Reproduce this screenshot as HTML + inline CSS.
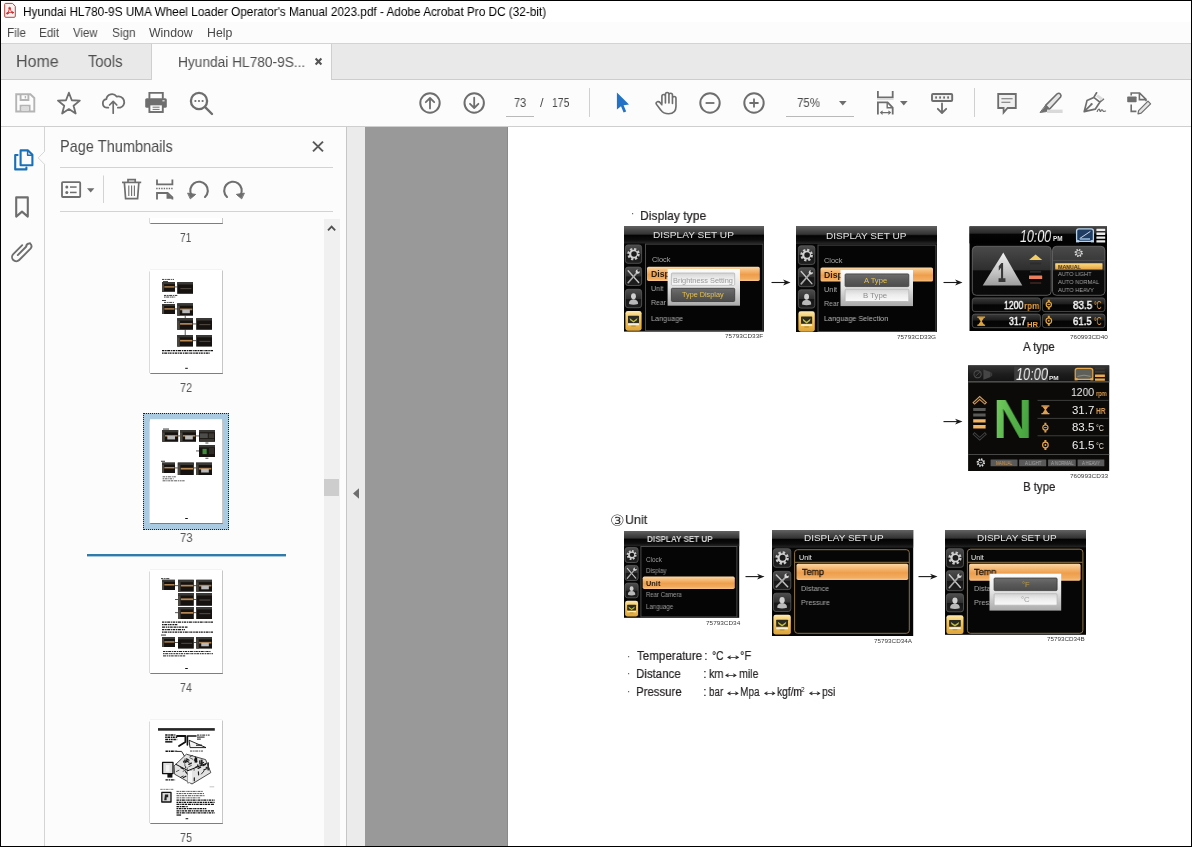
<!DOCTYPE html>
<html lang="en">
<head>
<meta charset="utf-8">
<title>Hyundai HL780-9S UMA Wheel Loader Operator's Manual 2023.pdf - Adobe Acrobat Pro DC (32-bit)</title>
<style>
*{box-sizing:border-box;margin:0;padding:0}
html,body{width:1192px;height:847px;overflow:hidden;background:#fff}
body{font-family:"Liberation Sans",sans-serif;color:#222;position:relative}
.a{position:absolute}
.t{position:absolute;white-space:nowrap;line-height:1;transform-origin:0 0;will-change:transform}
svg{position:absolute;left:0;top:0;overflow:visible}
#win{position:absolute;left:0;top:0;width:1192px;height:847px;overflow:hidden;background:#fcfcfc}
#frame{position:absolute;left:0;top:0;width:1192px;height:847px;border:1px solid #000;pointer-events:none;z-index:50}
#title{left:0;top:0;width:1192px;height:22px;background:#fff}
#title .t{left:23px;top:5px;font-size:12.3px;color:#000}
#menu{left:0;top:22px;width:1192px;height:21px;background:#fcfcfc}
#menu .t{font-size:12.3px;color:#484848;top:5px}
#tabs{left:0;top:43px;width:1192px;height:37px;background:#e9e9e9;border-top:1px solid #d3d3d3;border-bottom:1px solid #cdcdcd}
#tabact{left:151px;top:43px;width:181px;height:37px;background:#fcfcfc;border-left:1px solid #cfcfcf;border-right:1px solid #cfcfcf;border-top:1px solid #d3d3d3}
#tabs .t,#tabact .t{color:#4f4f4f}
#tool{left:0;top:80px;width:1192px;height:47px;background:#fcfcfc;border-bottom:1px solid #cfcfcf}
#tool .t{font-size:12.3px;color:#4a4a4a}
#nav{left:1px;top:127px;width:44px;height:720px;background:#fcfcfc;border-right:1px solid #d4d4d4}
#panel{left:45px;top:127px;width:301px;height:720px;background:#fcfcfc}
#psplit{left:346px;top:127px;width:19px;height:720px;background:#ebebeb;border-left:1px solid #c6c6c6}
#doc{left:365px;top:127px;width:827px;height:720px;background:#999}
.pg{position:absolute;left:0;top:0;width:1192px;height:847px}
#page{left:508px;top:127px;width:684px;height:720px;background:#fff;overflow:hidden}
</style>
</head>
<body>
<div id="win">
  <div id="title" class="a">
    <svg width="22" height="22" viewBox="0 0 22 22">
      <path d="M5.6 3.4 H12.6 L15.3 6.3 V16.2 Q15.3 17.3 14.2 17.3 H5.8 Q4.7 17.3 4.7 16.2 V4.4 Q4.7 3.4 5.6 3.4 Z" fill="#fdf1f0" stroke="#b2463f" stroke-width="1"/>
      <g fill="none" stroke="#cc2a2e" stroke-width="0.9" stroke-linecap="round">
        <path d="M9.7 8.2 Q10.6 10.9 12.6 12.6 M9.4 8.4 Q9.2 11.2 7.4 13.4 M7.6 12.9 Q10 11.7 12.4 12.4"/>
        <circle cx="9.5" cy="8.1" r="0.8"/><circle cx="7.3" cy="13.4" r="0.8"/><circle cx="12.6" cy="12.6" r="0.8"/>
      </g>
    </svg>
    <div class="t" style="left:22.85px;top:6.00px;font-size:12.4px;transform:scaleX(0.9501);color:#000;">Hyundai HL780-9S UMA Wheel Loader Operator's Manual 2023.pdf - Adobe Acrobat Pro DC (32-bit)</div>
  </div>
  <div id="menu" class="a">
<div class="t" style="left:6.74px;top:5.00px;font-size:12.3px;transform:scaleX(0.9568);color:#484848;">File</div>
<div class="t" style="left:38.65px;top:5.00px;font-size:12.3px;transform:scaleX(0.9528);color:#484848;">Edit</div>
<div class="t" style="left:73.40px;top:5.00px;font-size:12.3px;transform:scaleX(0.9286);color:#484848;">View</div>
<div class="t" style="left:111.62px;top:5.00px;font-size:12.3px;transform:scaleX(0.9597);color:#484848;">Sign</div>
<div class="t" style="left:149.40px;top:5.00px;font-size:12.3px;transform:scaleX(0.9931);color:#484848;">Window</div>
<div class="t" style="left:206.81px;top:5.00px;font-size:12.3px;transform:scaleX(0.9945);color:#484848;">Help</div>
  </div>
  <div id="tabs" class="a">
<div class="t" style="left:15.85px;top:9.00px;font-size:16.2px;transform:scaleX(0.9857);color:#4f4f4f;">Home</div>
<div class="t" style="left:88.37px;top:9.00px;font-size:16.2px;transform:scaleX(0.9121);color:#4f4f4f;">Tools</div>
  </div>
  <div id="tabact" class="a">
    <div class="t" style="left:25.70px;top:11.00px;font-size:14px;transform:scaleX(0.9790);color:#4f4f4f;">Hyundai HL780-9S...</div>
    <svg width="181" height="37" viewBox="152 44 181 37"><path d="M315.6 58.6 L321.4 64.4 M321.4 58.6 L315.6 64.4" stroke="#555" stroke-width="2.1" fill="none" stroke-linecap="butt"/></svg>
  </div>
  <div id="tool" class="a">
    <svg width="1192" height="47" viewBox="0 80 1192 47" fill="none" stroke="#6e6e6e" stroke-width="1.9" stroke-linejoin="round" stroke-linecap="round">
      <!-- save (disabled) -->
      <g stroke="#b4b4b4" stroke-linecap="butt" stroke-linejoin="miter">
        <path d="M16.2 94.2 H30.4 L34.3 98 V111.5 H16.2 Z"/>
        <path d="M20.6 94.2 V100 H28.4 V94.2" />
        <path d="M25.4 96 V98.4" stroke-width="1.4"/>
        <path d="M20.6 111.5 V105.6 H29.6 V111.5" />
        <rect x="21.6" y="106.6" width="7" height="4.4" fill="#dcdcdc" stroke="none"/>
      </g>
      <!-- star -->
      <path d="M68.90 92.70 L71.78 100.24 L79.84 100.65 L73.56 105.71 L75.66 113.50 L68.90 109.10 L62.14 113.50 L64.24 105.71 L57.96 100.65 L66.02 100.24 Z" stroke-width="1.8" stroke-linejoin="round"/>
      <!-- cloud upload -->
      <path d="M108.3 107.7 H106.6 A4.3 4.3 0 0 1 106.4 99.2 A5.6 5.6 0 0 1 116.6 96.6 A5.3 5.3 0 0 1 120.2 107.7 H117.9" stroke-width="1.8"/>
      <path d="M113.2 113.2 V101.6 M109.6 105 L113.2 101.4 L116.8 105" stroke-width="1.7"/>
      <!-- printer -->
      <path d="M149.4 98 V92.9 H162.8 V98" stroke-linejoin="miter"/>
      <rect x="145.2" y="98.2" width="21.6" height="9.6" rx="1.6" fill="#6e6e6e" stroke="none"/>
      <rect x="149.4" y="104.4" width="13.4" height="7.6" fill="#fcfcfc" stroke-linejoin="miter"/>
      <path d="M153 107.2 H159.2 M153 109.4 H159.2" stroke-width="1" stroke="#6e6e6e"/>
      <rect x="162.4" y="100.2" width="2.2" height="1.2" fill="#e8e8e8" stroke="none"/>
      <!-- find -->
      <circle cx="199" cy="101" r="8.1" stroke-width="2.3"/>
      <path d="M205.4 107.4 L212 114" stroke-width="2.4"/>
      <g fill="#6e6e6e" stroke="none"><circle cx="195.4" cy="101" r="1.1"/><circle cx="199" cy="101" r="1.1"/><circle cx="202.6" cy="101" r="1.1"/></g>
      <!-- up/down -->
      <circle cx="430" cy="103" r="9.7" stroke-width="2"/>
      <path d="M430 108.4 V98.2 M425.8 102.2 L430 98 L434.2 102.2" stroke-width="1.8"/>
      <circle cx="474.2" cy="103" r="9.7" stroke-width="2"/>
      <path d="M474.2 97.6 V107.8 M470 103.8 L474.2 108 L478.4 103.8" stroke-width="1.8"/>
      <path d="M506 116.5 H534" stroke="#b9b9b9" stroke-width="1" stroke-linecap="butt"/>
      <path d="M589.5 88 V117" stroke="#d0d0d0" stroke-width="1" stroke-linecap="butt"/>
      <!-- pointer -->
      <path d="M616.9 92.4 L616.9 109.6 L621 106.2 L623.6 112.6 L626.2 111.5 L623.6 105.2 L629 104.6 Z" fill="#2272c6" stroke="none"/>
      <!-- hand -->
      <path transform="translate(655.3 0) scale(1.1 1) translate(-655.3 0)" d="M661.3 103.6 V96.6 Q661.3 94.6 662.9 94.6 Q664.5 94.6 664.5 96.6 V103 M664.5 96.4 V94.2 Q664.5 92.4 666.1 92.4 Q667.7 92.4 667.7 94.2 V103 M667.7 96.2 V95 Q667.7 93.2 669.3 93.2 Q670.9 93.2 670.9 95 V103.6 M670.9 98.4 Q670.9 96.6 672.5 96.6 Q674.1 96.6 674.1 98.4 V106.6 Q674.1 113.8 667.4 113.8 Q662.6 113.8 660.4 110.2 L656.4 104.4 Q655.4 102.6 657 101.8 Q658.6 101.2 659.8 102.8 L661.3 104.8" stroke-width="1.5"/>
      <!-- zoom out / in -->
      <circle cx="710" cy="103" r="9.7" stroke-width="2"/>
      <path d="M705.6 103 H714.4" stroke-width="1.8" stroke-linecap="butt"/>
      <circle cx="754" cy="103" r="9.7" stroke-width="2"/>
      <path d="M749.4 103 H758.6 M754 98.4 V107.6" stroke-width="1.8" stroke-linecap="butt"/>
      <path d="M786 116.5 H854" stroke="#b9b9b9" stroke-width="1" stroke-linecap="butt"/>
      <path d="M839 101 H846.6 L842.8 105.4 Z" fill="#6e6e6e" stroke="none"/>
      <!-- fit width -->
      <g stroke-linecap="butt" stroke-linejoin="miter" stroke-width="1.8">
        <path d="M877.9 91 V97.4 H892.7 V91"/>
        <path d="M877.9 114.6 V102.4 H887.6 L892.7 107.6 V114.6"/>
        <path d="M887.2 102.8 V107.8 H892.4" stroke-width="1.4"/>
        <path d="M880.6 112.6 H890.4 M882.6 110.8 L880.6 112.6 L882.6 114.4 M888.4 110.8 L890.4 112.6 L888.4 114.4" stroke-width="1.1"/>
        <path d="M877 99.6 H893.6" stroke="#dadada" stroke-width="1"/>
      </g>
      <path d="M900 101 H907.6 L903.8 105.4 Z" fill="#6e6e6e" stroke="none"/>
      <!-- scrolling -->
      <rect x="932" y="94" width="20.2" height="7" rx="1" stroke-width="1.9" fill="#f0f0f0"/>
      <g fill="#6e6e6e" stroke="none"><rect x="935.2" y="96.4" width="1.8" height="2.2"/><rect x="939.2" y="96.4" width="1.8" height="2.2"/><rect x="943.2" y="96.4" width="1.8" height="2.2"/><rect x="947.2" y="96.4" width="1.8" height="2.2"/></g>
      <path d="M942 103.4 V112.6 M937.8 108.8 L942 113 L946.2 108.8" stroke-width="1.8"/>
      <path d="M974.5 88 V117" stroke="#d0d0d0" stroke-width="1" stroke-linecap="butt"/>
      <!-- comment -->
      <path d="M998.2 94 H1015.8 V108 H1007.6 L1003.6 112.6 V108 H998.2 Z" stroke-width="1.8" fill="#f0f0f0" stroke-linejoin="miter"/>
      <path d="M1001.4 98.8 H1012.6 M1001.4 102.2 H1010.4" stroke-width="1.1" stroke-linecap="butt"/>
      <!-- highlighter -->
      <path d="M1045.6 105.4 L1057.2 93.8 Q1058.9 92.6 1060.3 94 Q1061.6 95.4 1060.6 97 L1049.4 109.2 Z" stroke-width="1.6" fill="#e6e6e6"/>
      <path d="M1045.8 105.6 L1049.2 109 L1046.4 111.6 L1040.4 112.4 Z" fill="#6e6e6e" stroke-width="1"/>
      <rect x="1047" y="109.6" width="15.6" height="3.4" fill="#d9d9d9" stroke="none"/>
      <!-- sign pen -->
      <path d="M1096.6 92.8 L1093.8 97.4 L1099.8 102.2 L1103.4 99.2 M1093.8 97.4 L1087 100.6 L1084.2 111.6 L1095.2 109.2 L1099.8 102.2 M1084.6 111.2 L1091.2 104.6" stroke-width="1.7"/>
      <circle cx="1091.6" cy="104.2" r="1.1" fill="#6e6e6e" stroke="none"/>
      <path d="M1097.2 111.4 Q1098.6 108.4 1099.6 109.4 Q1099.8 112 1100.8 111.2 Q1101.8 109 1102.6 110.2 Q1103 112 1105.6 111" stroke-width="1.2"/>
      <path d="M1098 94.6 L1103.6 98.6 L1101.2 100.4 L1096 96.4 Z" fill="#dcdcdc" stroke="none"/>
      <!-- edit pdf -->
      <path d="M1131.2 95.4 V93 H1139.6 L1146 99.4 V101.2 M1139.4 93.4 V99.6 H1145.6" stroke-width="1.6" stroke-linejoin="miter" stroke-linecap="butt"/>
      <path d="M1131.2 104.6 V111.4 H1136.4" stroke-width="1.6" stroke-linejoin="miter" stroke-linecap="butt"/>
      <rect x="1127.2" y="96.4" width="9.4" height="5.8" rx="0.8" fill="#6e6e6e" stroke="none"/>
      <path d="M1138.6 110.6 L1148 101.2 L1150.6 103.8 L1141.2 113.2 L1138 113.8 Z" stroke-width="1.2" fill="#e4e4e4"/>
    </svg>
    <div class="t" style="left:513.54px;top:17.00px;font-size:12.3px;transform:scaleX(0.8940);color:#4a4a4a;">73</div>
<div class="t" style="left:540.30px;top:17.00px;font-size:12.6px;color:#4a4a4a;">/</div>
<div class="t" style="left:551.86px;top:17.00px;font-size:12.3px;transform:scaleX(0.8446);color:#4a4a4a;">175</div>
<div class="t" style="left:796.62px;top:17.00px;font-size:12.3px;transform:scaleX(0.9339);color:#4a4a4a;">75%</div>
  </div>
<div id="nav" class="a"></div>
<div id="panel" class="a"></div>
<div id="psplit" class="a"></div>
<div class="a" style="left:324px;top:219px;width:16px;height:627px;background:#f0f0f0"></div>
<div class="a" style="left:324px;top:479px;width:15px;height:17px;background:#cdcdcd"></div>
<svg width="365" height="720" viewBox="0 127 365 720" style="top:127px" fill="none" stroke-linejoin="round" stroke-linecap="round"><path d="M45.6 150.6 L38.4 157.9 L45.6 165.2 Z" fill="#fcfcfc" stroke="none"/><path d="M44.5 151.5 L38.2 157.9 L44.5 164.3" stroke="#d8d8d8" stroke-width="1" stroke-linejoin="miter"/><g stroke="#1a70b7" stroke-width="2.1" stroke-linejoin="round"><path d="M20.6 150.4 H28 L32.4 154.8 V165.2 H20.6 Z" fill="#fcfcfc"/><path d="M27.6 150.8 V155.2 H32" stroke-width="1.5"/><path d="M17.6 155 H15.2 V169.4 H26.4 V167.6"/></g><path d="M16.2 197.4 H27.8 V216.6 L22 211.6 L16.2 216.6 Z" stroke="#6e6e6e" stroke-width="2.1" stroke-linejoin="round"/><g transform="translate(21.5 251.8) rotate(45) scale(1.13)" stroke="#6e6e6e" stroke-width="1.65" fill="none"><path d="M-3.7 -4.6 V6.6 A3.7 3.7 0 0 0 3.7 6.6 V-7.6 A3.4 3.4 0 0 0 0.1 -10.6"/><path d="M0.1 -10.6 A3.4 3.4 0 0 0 -0.3 -6 V4.4" stroke-width="1.7"/></g><path d="M60 167.5 H333 M60 211.5 H333" stroke="#d3d3d3" stroke-width="1" stroke-linecap="butt"/><path d="M313 141.6 L323 151.4 M323 141.6 L313 151.4" stroke="#5a5a5a" stroke-width="2" stroke-linecap="butt"/><rect x="62" y="182.2" width="18.2" height="14.8" rx="0.8" stroke="#6e6e6e" stroke-width="1.8"/><g fill="#6e6e6e" stroke="none"><circle cx="66.8" cy="187" r="1.5"/><circle cx="66.8" cy="192.4" r="1.5"/><rect x="70" y="186.3" width="6.6" height="1.5"/><rect x="70" y="191.7" width="6.6" height="1.5"/><path d="M87 188.2 H94.4 L90.7 192.4 Z"/></g><path d="M103.5 175.5 V203" stroke="#d3d3d3" stroke-width="1" stroke-linecap="butt"/><g stroke="#6e6e6e" stroke-width="1.7" stroke-linecap="butt" stroke-linejoin="miter"><path d="M122 182.4 H141.2"/><path d="M128 182 V179.6 H135.2 V182"/><path d="M124.4 183 L125.6 198.6 H137.6 L138.8 183"/><path d="M128.8 185.6 V196 M131.6 185.6 V196 M134.4 185.6 V196" stroke-width="1.1"/></g><g stroke="#6e6e6e" stroke-width="1.8" stroke-linecap="butt" stroke-linejoin="miter"><path d="M157 179.4 V184.4 H172.4 V179.4"/><path d="M156.2 188.6 H173.4" stroke-dasharray="1.4 1.1" stroke-width="1.5"/><path d="M157 199.4 V193 H167.6 L172.4 197.4 V199.4"/><path d="M167.2 193.4 V198 H172" stroke-width="1.3" fill="#6e6e6e"/></g><g stroke="#6e6e6e" stroke-width="2.1"><path d="M205 197 A8.8 8.8 0 1 0 191.6 195.2" /><path d="M188 193.2 L195.6 194.4 L190.6 198.6 Z" fill="#6e6e6e" stroke-width="1"/></g><g stroke="#6e6e6e" stroke-width="2.1"><path d="M227 197 A8.8 8.8 0 1 1 240.4 195.2" /><path d="M244 193.2 L236.4 194.4 L241.4 198.6 Z" fill="#6e6e6e" stroke-width="1"/></g><path d="M328 230.4 L331.6 226.6 L335.2 230.4" stroke="#505050" stroke-width="1.8" stroke-linejoin="miter" stroke-linecap="butt"/><path d="M353 493.5 L359 488.2 V498.8 Z" fill="#6e6e6e" stroke="none"/><g stroke="none"><rect x="149" y="218" width="1" height="5.5" fill="#dadada"/><rect x="222" y="218" width="1" height="5.5" fill="#c6c6c6"/><rect x="150.3" y="223" width="72.5" height="1" fill="#7e7e7e"/><rect x="150" y="218" width="72" height="5" fill="#fff"/><rect x="149" y="271.5" width="1" height="101.5" fill="#dadada"/><rect x="150" y="269" width="72" height="1" fill="#f3f3f3"/><rect x="222" y="270.5" width="1" height="103" fill="#c6c6c6"/><rect x="150.3" y="373" width="72.5" height="1" fill="#7e7e7e"/><rect x="150" y="270" width="72" height="103" fill="#fff"/><path d="M162 279.45 h12.00" stroke="#333" stroke-width="0.9" stroke-dasharray="2.4 .7 1.5 .6 3.1 .8 1.1 .6" fill="none" stroke-linecap="butt"/><rect x="163" y="281.00" width="5.00" height="0.9" fill="#333"/><rect x="162" y="282.2" width="13" height="9.6" fill="#15120f"/><rect x="162" y="282.2" width="13" height="1.92" fill="#3a3936"/><rect x="164.34" y="286.23" width="10.14" height="1.34" fill="#b98a55"/><rect x="162" y="284.12" width="2.08" height="7.68" fill="#4a4640"/><rect x="177.2" y="282.2" width="15.8" height="11.6" fill="#15120f"/><rect x="177.2" y="282.2" width="15.8" height="2.32" fill="#3a3936"/><rect x="180.36" y="288.00" width="11.06" height="1.16" fill="#4a443c"/><rect x="175" y="286.6" width="2.4" height="0.7" fill="#111"/><path d="M164 295.45 h14.00" stroke="#222" stroke-width="0.9" stroke-dasharray="2.4 .7 1.5 .6 3.1 .8 1.1 .6" fill="none" stroke-linecap="butt"/><path d="M164 297.05 h11.20" stroke="#222" stroke-width="0.9" stroke-dasharray="1.6 .6 2.8 .7 1.2 .5 2.2 .8" fill="none" stroke-linecap="butt"/><rect x="162" y="300.00" width="4.00" height="0.9" fill="#333"/><path d="M164 302.45 h10.00" stroke="#333" stroke-width="0.9" stroke-dasharray="2.4 .7 1.5 .6 3.1 .8 1.1 .6" fill="none" stroke-linecap="butt"/><rect x="162" y="304" width="13" height="10" fill="#15120f"/><rect x="162" y="304" width="13" height="2.00" fill="#3a3936"/><rect x="164.34" y="308.20" width="10.14" height="1.40" fill="#b98a55"/><rect x="162" y="306.00" width="2.08" height="8.00" fill="#4a4640"/><rect x="177.2" y="303.3" width="15.8" height="12.4" fill="#15120f"/><rect x="177.2" y="303.3" width="15.8" height="2.48" fill="#3a3936"/><rect x="180.04" y="308.51" width="12.32" height="1.74" fill="#a87c4c"/><rect x="182.26" y="309.50" width="7.58" height="3.72" fill="#b9b9b9"/><rect x="177.2" y="305.78" width="2.53" height="9.92" fill="#4a4640"/><rect x="175" y="308.6" width="2.4" height="0.7" fill="#111"/><rect x="184.8" y="315.7" width="0.7" height="2.6" fill="#111"/><rect x="177.2" y="318.2" width="15.8" height="11.6" fill="#15120f"/><rect x="177.2" y="318.2" width="15.8" height="2.32" fill="#3a3936"/><rect x="180.04" y="323.07" width="12.32" height="1.62" fill="#b98a55"/><rect x="177.2" y="320.52" width="2.53" height="9.28" fill="#4a4640"/><rect x="196.2" y="318.2" width="15.8" height="11.6" fill="#15120f"/><rect x="196.2" y="318.2" width="15.8" height="2.32" fill="#3a3936"/><rect x="199.36" y="324.00" width="11.06" height="1.16" fill="#4a443c"/><rect x="193" y="323.6" width="3.2" height="0.7" fill="#111"/><rect x="184.8" y="329.8" width="0.7" height="5.2" fill="#111"/><rect x="177.2" y="335" width="15.8" height="11.6" fill="#15120f"/><rect x="177.2" y="335" width="15.8" height="2.32" fill="#3a3936"/><rect x="180.04" y="339.87" width="12.32" height="1.62" fill="#b98a55"/><rect x="177.2" y="337.32" width="2.53" height="9.28" fill="#4a4640"/><rect x="196.2" y="335" width="15.8" height="11.6" fill="#15120f"/><rect x="196.2" y="335" width="15.8" height="2.32" fill="#3a3936"/><rect x="199.36" y="340.80" width="11.06" height="1.16" fill="#4a443c"/><rect x="193" y="340.4" width="3.2" height="0.7" fill="#111"/><path d="M162 350.65 h51.00" stroke="#111" stroke-width="1.3" stroke-dasharray="2.4 .7 1.5 .6 3.1 .8 1.1 .6" fill="none" stroke-linecap="butt"/><path d="M162 353.05 h47.94" stroke="#111" stroke-width="1.3" stroke-dasharray="1.6 .6 2.8 .7 1.2 .5 2.2 .8" fill="none" stroke-linecap="butt"/><rect x="185.2" y="367.8" width="2.6" height="1" fill="#111"/><rect x="143" y="413" width="86" height="117" fill="#a9cae0"/><rect x="149" y="421.5" width="1" height="101.5" fill="#dadada"/><rect x="150" y="419" width="72" height="1" fill="#f3f3f3"/><rect x="222" y="420.5" width="1" height="103" fill="#c6c6c6"/><rect x="150.3" y="523" width="72.5" height="1" fill="#7e7e7e"/><rect x="150" y="420" width="72" height="103" fill="#fff"/><rect x="163" y="428.60" width="6.00" height="0.9" fill="#222"/><rect x="162.2" y="430" width="16" height="11.8" fill="#15120f"/><rect x="162.2" y="430" width="16" height="2.36" fill="#3a3936"/><rect x="165.08" y="434.96" width="12.48" height="1.65" fill="#a87c4c"/><rect x="167.32" y="435.90" width="7.68" height="3.54" fill="#b9b9b9"/><rect x="162.2" y="432.36" width="2.56" height="9.44" fill="#4a4640"/><rect x="180" y="430" width="16" height="11.8" fill="#15120f"/><rect x="180" y="430" width="16" height="2.36" fill="#3a3936"/><rect x="182.88" y="434.96" width="12.48" height="1.65" fill="#a87c4c"/><rect x="185.12" y="435.90" width="7.68" height="3.54" fill="#b9b9b9"/><rect x="180" y="432.36" width="2.56" height="9.44" fill="#4a4640"/><rect x="199" y="430" width="16" height="11.8" fill="#15120f"/><rect x="199" y="430" width="16" height="2.36" fill="#3a3936"/><rect x="199.80" y="433.30" width="8.00" height="4.72" fill="#4c4c4a"/><rect x="208.60" y="433.30" width="5.60" height="4.72" fill="#3d3a34"/><rect x="199.80" y="438.73" width="14.40" height="2.36" fill="#3b3733"/><rect x="178.2" y="435.6" width="1.8" height="0.7" fill="#111"/><rect x="196" y="435.6" width="3" height="0.7" fill="#111"/><rect x="205.4" y="442.6" width="3" height="0.8" fill="#222"/><rect x="199" y="445" width="16" height="12" fill="#15120f"/><rect x="199" y="445" width="16" height="2.40" fill="#3a3936"/><rect x="202.52" y="448.84" width="4.16" height="5.28" fill="#3f8a3d"/><rect x="208.92" y="448.00" width="5.28" height="6.00" fill="#2f2c28"/><rect x="196" y="450.6" width="3" height="0.7" fill="#111"/><rect x="205.4" y="457.8" width="3" height="0.8" fill="#222"/><rect x="161" y="460.80" width="4.00" height="0.9" fill="#222"/><rect x="162" y="462.6" width="13" height="10.4" fill="#15120f"/><rect x="162" y="462.6" width="13" height="2.08" fill="#3a3936"/><rect x="164.34" y="466.97" width="10.14" height="1.46" fill="#b98a55"/><rect x="162" y="464.68" width="2.08" height="8.32" fill="#4a4640"/><rect x="177.8" y="462.6" width="16" height="12.4" fill="#15120f"/><rect x="177.8" y="462.6" width="16" height="2.48" fill="#3a3936"/><rect x="180.68" y="467.81" width="12.48" height="1.74" fill="#b98a55"/><rect x="177.8" y="465.08" width="2.56" height="9.92" fill="#4a4640"/><rect x="196" y="462.6" width="16" height="12.4" fill="#15120f"/><rect x="196" y="462.6" width="16" height="2.48" fill="#3a3936"/><rect x="198.88" y="467.81" width="12.48" height="1.74" fill="#a87c4c"/><rect x="201.12" y="468.80" width="7.68" height="3.72" fill="#b9b9b9"/><rect x="196" y="465.08" width="2.56" height="9.92" fill="#4a4640"/><rect x="175" y="467.6" width="2.8" height="0.7" fill="#111"/><rect x="193.8" y="467.6" width="2.2" height="0.7" fill="#111"/><path d="M162.6 476.80 h13.20" stroke="#333" stroke-width="0.8" stroke-dasharray="2.4 .7 1.5 .6 3.1 .8 1.1 .6" fill="none" stroke-linecap="butt"/><path d="M162.6 478.80 h11.00" stroke="#333" stroke-width="0.8" stroke-dasharray="1.6 .6 2.8 .7 1.2 .5 2.2 .8" fill="none" stroke-linecap="butt"/><path d="M162.6 480.80 h22.00" stroke="#333" stroke-width="0.8" stroke-dasharray="3 .7 1.3 .6 1.9 .6 2.6 .8" fill="none" stroke-linecap="butt"/><rect x="185.2" y="518" width="2.6" height="1" fill="#111"/><rect x="87" y="554" width="199" height="2.4" fill="#2f7cab"/><rect x="149" y="571.5" width="1" height="101.5" fill="#dadada"/><rect x="150" y="569" width="72" height="1" fill="#f3f3f3"/><rect x="222" y="570.5" width="1" height="103" fill="#c6c6c6"/><rect x="150.3" y="673" width="72.5" height="1" fill="#7e7e7e"/><rect x="150" y="570" width="72" height="103" fill="#fff"/><path d="M161 578.65 h9.00" stroke="#222" stroke-width="0.9" stroke-dasharray="2.4 .7 1.5 .6 3.1 .8 1.1 .6" fill="none" stroke-linecap="butt"/><rect x="162" y="579.8" width="13" height="10.2" fill="#15120f"/><rect x="162" y="579.8" width="13" height="2.04" fill="#3a3936"/><rect x="164.34" y="584.08" width="10.14" height="1.43" fill="#b98a55"/><rect x="162" y="581.84" width="2.08" height="8.16" fill="#4a4640"/><rect x="178" y="579.8" width="15.8" height="11.9" fill="#15120f"/><rect x="178" y="579.8" width="15.8" height="2.38" fill="#3a3936"/><rect x="180.84" y="584.80" width="12.32" height="1.67" fill="#b98a55"/><rect x="178" y="582.18" width="2.53" height="9.52" fill="#4a4640"/><rect x="196.2" y="579.8" width="15.8" height="11.9" fill="#15120f"/><rect x="196.2" y="579.8" width="15.8" height="2.38" fill="#3a3936"/><rect x="199.04" y="584.80" width="12.32" height="1.67" fill="#a87c4c"/><rect x="201.26" y="585.75" width="7.58" height="3.57" fill="#b9b9b9"/><rect x="196.2" y="582.18" width="2.53" height="9.52" fill="#4a4640"/><rect x="175" y="585.4" width="3" height="0.7" fill="#111"/><rect x="193.8" y="585.4" width="2.4" height="0.7" fill="#111"/><rect x="178" y="593" width="15.8" height="12.8" fill="#15120f"/><rect x="178" y="593" width="15.8" height="2.56" fill="#3a3936"/><rect x="180.84" y="598.38" width="12.32" height="1.79" fill="#b98a55"/><rect x="178" y="595.56" width="2.53" height="10.24" fill="#4a4640"/><rect x="196.2" y="593" width="15.8" height="12.8" fill="#15120f"/><rect x="196.2" y="593" width="15.8" height="2.56" fill="#3a3936"/><rect x="199.36" y="599.40" width="11.06" height="1.28" fill="#4a443c"/><rect x="175" y="599" width="3" height="0.7" fill="#111"/><rect x="193.8" y="599" width="2.4" height="0.7" fill="#111"/><rect x="178" y="607" width="15.8" height="12" fill="#15120f"/><rect x="178" y="607" width="15.8" height="2.40" fill="#3a3936"/><rect x="180.84" y="612.04" width="12.32" height="1.68" fill="#b98a55"/><rect x="178" y="609.40" width="2.53" height="9.60" fill="#4a4640"/><rect x="196.2" y="607" width="15.8" height="12" fill="#15120f"/><rect x="196.2" y="607" width="15.8" height="2.40" fill="#3a3936"/><rect x="199.36" y="613.00" width="11.06" height="1.20" fill="#4a443c"/><rect x="175" y="612.4" width="3" height="0.7" fill="#111"/><rect x="193.8" y="612.4" width="2.4" height="0.7" fill="#111"/><path d="M162 622.20 h51.00" stroke="#1a1a1a" stroke-width="1.2" stroke-dasharray="2.4 .7 1.5 .6 3.1 .8 1.1 .6" fill="none" stroke-linecap="butt"/><path d="M162 624.70 h15.30" stroke="#1a1a1a" stroke-width="1.2" stroke-dasharray="1.6 .6 2.8 .7 1.2 .5 2.2 .8" fill="none" stroke-linecap="butt"/><path d="M162 627.20 h25.50" stroke="#1a1a1a" stroke-width="1.2" stroke-dasharray="3 .7 1.3 .6 1.9 .6 2.6 .8" fill="none" stroke-linecap="butt"/><path d="M162 629.70 h22.95" stroke="#1a1a1a" stroke-width="1.2" stroke-dasharray="2.4 .7 1.5 .6 3.1 .8 1.1 .6" fill="none" stroke-linecap="butt"/><path d="M162 632.20 h51.00" stroke="#1a1a1a" stroke-width="1.2" stroke-dasharray="1.6 .6 2.8 .7 1.2 .5 2.2 .8" fill="none" stroke-linecap="butt"/><rect x="161" y="634.60" width="5.00" height="0.9" fill="#222"/><rect x="162" y="637" width="13" height="10" fill="#15120f"/><rect x="162" y="637" width="13" height="2.00" fill="#3a3936"/><rect x="164.34" y="641.20" width="10.14" height="1.40" fill="#b98a55"/><rect x="162" y="639.00" width="2.08" height="8.00" fill="#4a4640"/><rect x="178" y="637" width="15.8" height="11.6" fill="#15120f"/><rect x="178" y="637" width="15.8" height="2.32" fill="#3a3936"/><rect x="181.16" y="642.80" width="11.06" height="1.16" fill="#4a443c"/><rect x="196.2" y="637" width="15.8" height="11.6" fill="#15120f"/><rect x="196.2" y="637" width="15.8" height="2.32" fill="#3a3936"/><rect x="199.04" y="641.87" width="12.32" height="1.62" fill="#a87c4c"/><rect x="201.26" y="642.80" width="7.58" height="3.48" fill="#b9b9b9"/><rect x="196.2" y="639.32" width="2.53" height="9.28" fill="#4a4640"/><rect x="175" y="642" width="3" height="0.7" fill="#111"/><rect x="193.8" y="642" width="2.4" height="0.7" fill="#111"/><path d="M163 651.50 h47.50" stroke="#222" stroke-width="1" stroke-dasharray="2.4 .7 1.5 .6 3.1 .8 1.1 .6" fill="none" stroke-linecap="butt"/><path d="M163 653.70 h50.00" stroke="#222" stroke-width="1" stroke-dasharray="1.6 .6 2.8 .7 1.2 .5 2.2 .8" fill="none" stroke-linecap="butt"/><path d="M163 655.90 h22.50" stroke="#222" stroke-width="1" stroke-dasharray="3 .7 1.3 .6 1.9 .6 2.6 .8" fill="none" stroke-linecap="butt"/><rect x="185.2" y="668" width="2.6" height="1" fill="#111"/><rect x="149" y="721.5" width="1" height="101.5" fill="#dadada"/><rect x="150" y="719" width="72" height="1" fill="#f3f3f3"/><rect x="222" y="720.5" width="1" height="103" fill="#c6c6c6"/><rect x="150.3" y="823" width="72.5" height="1" fill="#7e7e7e"/><rect x="150" y="720" width="72" height="103" fill="#fff"/><rect x="158" y="728.1" width="56.8" height="2.6" fill="#262626"/><path d="M165.2 734.95 h10.20" stroke="#111" stroke-width="1.5" stroke-dasharray="2.4 .7 1.5 .6 3.1 .8 1.1 .6" fill="none" stroke-linecap="butt"/><path d="M165.2 737.25 h12.00" stroke="#111" stroke-width="1.5" stroke-dasharray="1.6 .6 2.8 .7 1.2 .5 2.2 .8" fill="none" stroke-linecap="butt"/><path d="M165.2 739.55 h12.00" stroke="#111" stroke-width="1.5" stroke-dasharray="3 .7 1.3 .6 1.9 .6 2.6 .8" fill="none" stroke-linecap="butt"/><rect x="165.2" y="741.10" width="7.20" height="1.5" fill="#111"/><path d="M177 736 H185.4 V742 L179 746" stroke="#111" stroke-width="1.8" fill="none"/><path d="M187.4 745 V736 H196" stroke="#111" stroke-width="1.6" fill="none"/><path d="M197 735.10 h12.60" stroke="#1a1a1a" stroke-width="1" stroke-dasharray="2.4 .7 1.5 .6 3.1 .8 1.1 .6" fill="none" stroke-linecap="butt"/><rect x="197" y="736.60" width="7.56" height="1" fill="#1a1a1a"/><rect x="197" y="738.60" width="3.78" height="1" fill="#1a1a1a"/><path d="M189.4 740.4 L206 747.6 H190.4 Z" fill="#f2f2f2" stroke="#111" stroke-width="0.9"/><rect x="196" y="744.6" width="6" height="1.2" fill="#222"/><path d="M165.5 751.30 h11.60" stroke="#111" stroke-width="1.4" stroke-dasharray="2.4 .7 1.5 .6 3.1 .8 1.1 .6" fill="none" stroke-linecap="butt"/><path d="M190 751.05 h13.00" stroke="#333" stroke-width="0.9" stroke-dasharray="2.4 .7 1.5 .6 3.1 .8 1.1 .6" fill="none" stroke-linecap="butt"/><path d="M177 751.4 H181.6 L185 757" stroke="#111" stroke-width="0.9" fill="none"/><path d="M174.4 765.6 L186.4 754.2 L205.6 759.6 L210.8 772.6 L192 784 L175 774.4 Z" fill="#e3e3e3" stroke="#222" stroke-width="0.8"/><path d="M186.4 758.9 l2.6 1.3" stroke="#1c1c1c" stroke-width="1.2"/><path d="M179.0 770.2 l-2.6 1.3" stroke="#1c1c1c" stroke-width="0.7"/><path d="M189.9 756.8 l2.6 -1.3" stroke="#1c1c1c" stroke-width="0.7"/><path d="M183.1 771.3 l2.6 -1.3" stroke="#1c1c1c" stroke-width="0.7"/><path d="M203.5 762.5 l-2.6 1.3" stroke="#1c1c1c" stroke-width="1.2"/><path d="M185.9 776.2 l-2.6 1.3" stroke="#1c1c1c" stroke-width="1.2"/><path d="M194.3 759.9 l2.6 1.3" stroke="#1c1c1c" stroke-width="1.2"/><path d="M197.8 766.1 l0 -1.3" stroke="#1c1c1c" stroke-width="1.2"/><path d="M205.6 764.4 l-2.6 1.3" stroke="#1c1c1c" stroke-width="1.2"/><path d="M185.6 767.9 l0 -1.3" stroke="#1c1c1c" stroke-width="0.9"/><path d="M195.5 756.9 l0.2 1.3" stroke="#1c1c1c" stroke-width="0.9"/><path d="M180.9 767.7 l2.6 1.3" stroke="#1c1c1c" stroke-width="1.2"/><path d="M194.3 777.8 l0 3" stroke="#1c1c1c" stroke-width="1.2"/><path d="M187.2 767.9 l0.2 1.3" stroke="#1c1c1c" stroke-width="0.7"/><path d="M206.2 767.3 l2.6 1.3" stroke="#1c1c1c" stroke-width="1.2"/><path d="M198.4 771.8 l0.2 3" stroke="#1c1c1c" stroke-width="1.2"/><path d="M188.3 772.4 l2.6 -1.3" stroke="#1c1c1c" stroke-width="0.9"/><path d="M188.5 777.7 l2.6 1.3" stroke="#1c1c1c" stroke-width="0.9"/><path d="M188.9 762.2 l-2.6 -1.3" stroke="#1c1c1c" stroke-width="1.2"/><path d="M184.9 765.8 l0 -1.3" stroke="#1c1c1c" stroke-width="0.7"/><path d="M183.4 761.1 l0.2 1.3" stroke="#1c1c1c" stroke-width="0.9"/><path d="M185.0 758.8 l0 3" stroke="#1c1c1c" stroke-width="0.7"/><path d="M198.1 768.4 l2.6 -1.3" stroke="#1c1c1c" stroke-width="1.2"/><path d="M201.5 765.2 l0.2 -1.3" stroke="#1c1c1c" stroke-width="0.7"/><path d="M191.4 765.4 l-2.6 1.3" stroke="#1c1c1c" stroke-width="0.7"/><path d="M190.1 757.9 l2.6 1.3" stroke="#1c1c1c" stroke-width="0.7"/><path d="M194.1 769.0 l0 1.3" stroke="#1c1c1c" stroke-width="0.7"/><path d="M204.0 771.0 l-2.6 3" stroke="#1c1c1c" stroke-width="0.9"/><path d="M195.3 767.3 l2.6 -1.3" stroke="#1c1c1c" stroke-width="0.9"/><path d="M191.4 763.1 l-2.6 1.3" stroke="#1c1c1c" stroke-width="1.2"/><path d="M187.0 761.9 l-2.6 1.3" stroke="#1c1c1c" stroke-width="0.7"/><path d="M206.4 768.7 l-2.6 1.3" stroke="#1c1c1c" stroke-width="1.2"/><path d="M185.5 771.7 l2.6 3" stroke="#1c1c1c" stroke-width="1.2"/><path d="M187.7 759.3 l-2.6 3" stroke="#1c1c1c" stroke-width="1.2"/><path d="M183.1 776.1 l-2.6 1.3" stroke="#1c1c1c" stroke-width="0.9"/><path d="M199.7 760.9 l0.2 3" stroke="#1c1c1c" stroke-width="1.2"/><path d="M184.9 761.7 l0 -1.3" stroke="#1c1c1c" stroke-width="1.2"/><path d="M188 770.6 V783 M188 770.6 L206.4 763.4 M188 770.6 L176 764.4" stroke="#111" stroke-width="1" fill="none"/><rect x="187.6" y="771" width="4.4" height="11.4" fill="#f6f6f6"/><rect x="194.6" y="757.6" width="2.6" height="5" fill="#111"/><rect x="200.6" y="759.6" width="2" height="6.4" fill="#222"/><rect x="207.4" y="762.4" width="1.6" height="8" fill="#333"/><rect x="162.6" y="762.4" width="10.4" height="11.2" fill="#dedede" stroke="#111" stroke-width="1.3"/><rect x="166" y="765" width="3.4" height="6.6" fill="#f4f4f4"/><rect x="167.4" y="773.8" width="5" height="3.8" fill="#111"/><path d="M165.5 779.80 h9.60" stroke="#111" stroke-width="1.2" stroke-dasharray="2.4 .7 1.5 .6 3.1 .8 1.1 .6" fill="none" stroke-linecap="butt"/><rect x="209.6" y="786.60" width="4.60" height="0.6" fill="#999"/><path d="M160.3 789.35 h13.00" stroke="#444" stroke-width="0.7" stroke-dasharray="2.4 .7 1.5 .6 3.1 .8 1.1 .6" fill="none" stroke-linecap="butt"/><rect x="161.8" y="792.4" width="9.2" height="9.6" fill="#d8d8d8" stroke="#111" stroke-width="1.3"/><path d="M165 794.6 h3.2 v2.6 h-1.6 v3 h-2.4 z" fill="#222"/><path d="M176.5 791.40 h26.74" stroke="#2a2a2a" stroke-width="0.8" stroke-dasharray="2.4 .7 1.5 .6 3.1 .8 1.1 .6" fill="none" stroke-linecap="butt"/><path d="M176.5 793.55 h27.50" stroke="#2a2a2a" stroke-width="0.8" stroke-dasharray="1.6 .6 2.8 .7 1.2 .5 2.2 .8" fill="none" stroke-linecap="butt"/><path d="M176.5 795.70 h28.27" stroke="#2a2a2a" stroke-width="0.8" stroke-dasharray="3 .7 1.3 .6 1.9 .6 2.6 .8" fill="none" stroke-linecap="butt"/><path d="M176.5 797.85 h23.68" stroke="#2a2a2a" stroke-width="0.8" stroke-dasharray="2.4 .7 1.5 .6 3.1 .8 1.1 .6" fill="none" stroke-linecap="butt"/><path d="M176.5 800.20 h38.20" stroke="#111" stroke-width="1.2" stroke-dasharray="2.4 .7 1.5 .6 3.1 .8 1.1 .6" fill="none" stroke-linecap="butt"/><path d="M176.5 802.32 h38.20" stroke="#111" stroke-width="1.2" stroke-dasharray="1.6 .6 2.8 .7 1.2 .5 2.2 .8" fill="none" stroke-linecap="butt"/><path d="M176.5 804.44 h37.44" stroke="#111" stroke-width="1.2" stroke-dasharray="3 .7 1.3 .6 1.9 .6 2.6 .8" fill="none" stroke-linecap="butt"/><path d="M176.5 806.56 h11.46" stroke="#111" stroke-width="1.2" stroke-dasharray="2.4 .7 1.5 .6 3.1 .8 1.1 .6" fill="none" stroke-linecap="butt"/><path d="M176.5 808.68 h29.80" stroke="#111" stroke-width="1.2" stroke-dasharray="1.6 .6 2.8 .7 1.2 .5 2.2 .8" fill="none" stroke-linecap="butt"/><path d="M176.5 810.80 h38.20" stroke="#111" stroke-width="1.2" stroke-dasharray="3 .7 1.3 .6 1.9 .6 2.6 .8" fill="none" stroke-linecap="butt"/><path d="M176.5 812.92 h38.20" stroke="#111" stroke-width="1.2" stroke-dasharray="2.4 .7 1.5 .6 3.1 .8 1.1 .6" fill="none" stroke-linecap="butt"/><rect x="176.5" y="814.44" width="4.58" height="1.2" fill="#111"/><rect x="185.6" y="818.2" width="2.6" height="1" fill="#111"/></g></svg>
<div class="a" style="left:143px;top:413px;width:86px;height:117px;border:1px dotted #1e1e1e"></div>
<div class="t" style="left:60.06px;top:138.00px;font-size:16.2px;transform:scaleX(0.8978);color:#4b4b4b;">Page Thumbnails</div>
<div class="t" style="left:180.49px;top:232.00px;font-size:12.4px;transform:scaleX(0.8185);color:#555;">71</div>
<div class="t" style="left:180.45px;top:382.00px;font-size:12.4px;transform:scaleX(0.8742);color:#555;">72</div>
<div class="t" style="left:180.04px;top:532.00px;font-size:12.4px;transform:scaleX(0.9015);color:#555;">73</div>
<div class="t" style="left:180.46px;top:682.00px;font-size:12.4px;transform:scaleX(0.8571);color:#555;">74</div>
<div class="t" style="left:180.46px;top:832.00px;font-size:12.4px;transform:scaleX(0.8698);color:#555;">75</div>
<div class="pg">
<div id="doc" class="a"></div>
<div id="page" class="a"></div>
<div class="a" style="left:507px;top:127px;width:1px;height:720px;background:#8a8a8a"></div>
<svg width="1192" height="847" viewBox="0 0 1192 847"><defs><linearGradient id="hg" x1="0" y1="0" x2="0" y2="1"><stop offset="0" stop-color="#626262"/><stop offset=".2" stop-color="#4c4c4c"/><stop offset=".46" stop-color="#343434"/><stop offset=".54" stop-color="#040404"/><stop offset=".8" stop-color="#0c0c0c"/><stop offset="1" stop-color="#262626"/></linearGradient><linearGradient id="bg" x1="0" y1="0" x2="0" y2="1"><stop offset="0" stop-color="#fbd9a8"/><stop offset=".18" stop-color="#f7c384"/><stop offset=".55" stop-color="#ee9e4c"/><stop offset=".85" stop-color="#f2ac5f"/><stop offset="1" stop-color="#f6c58c"/></linearGradient><linearGradient id="pg" x1="0" y1="0" x2="0" y2="1"><stop offset="0" stop-color="#fdfdfd"/><stop offset=".5" stop-color="#e2e2e2"/><stop offset="1" stop-color="#a9a9a9"/></linearGradient><linearGradient id="pgd" x1="0" y1="0" x2="0" y2="1"><stop offset="0" stop-color="#6e6e6e"/><stop offset=".5" stop-color="#5a5a5a"/><stop offset="1" stop-color="#4c4c4c"/></linearGradient><linearGradient id="pgl" x1="0" y1="0" x2="0" y2="1"><stop offset="0" stop-color="#d4d4d4"/><stop offset=".45" stop-color="#ececec"/><stop offset="1" stop-color="#fafafa"/></linearGradient></defs></svg>
<div class="t" style="left:630.88px;top:209.00px;font-size:10px;color:#4a4a4a;">·</div>
<div class="t" style="left:639.55px;top:209.00px;font-size:13.6px;transform:scaleX(0.8944);color:#272425;-webkit-text-stroke:0.22px #272425;">Display type</div>
<svg width="1192" height="847" viewBox="0 0 1192 847"><rect x="624" y="226" width="140.00" height="105.60" fill="#050505"/><rect x="624" y="226" width="140.00" height="17.40" fill="url(#hg)"/><linearGradient id="sb1" x1="0" y1="0" x2="0" y2="1"><stop offset="0" stop-color="#4e4e4e"/><stop offset=".5" stop-color="#2f2f2f"/><stop offset=".52" stop-color="#161616"/><stop offset="1" stop-color="#202020"/></linearGradient><rect x="625.40" y="244.90" width="16.20" height="18.40" rx="2.6" fill="url(#sb1)" stroke="#5c5c5c" stroke-width="0.8"/><circle cx="633.50" cy="254.10" r="4.86" fill="none" stroke="#c9c9c9" stroke-width="2.75" stroke-dasharray="2.11 1.70"/><circle cx="633.50" cy="254.10" r="4.37" fill="#d2d2d2"/><circle cx="633.99" cy="253.94" r="2.75" fill="#1c1c1c"/><linearGradient id="sb2" x1="0" y1="0" x2="0" y2="1"><stop offset="0" stop-color="#4e4e4e"/><stop offset=".5" stop-color="#2f2f2f"/><stop offset=".52" stop-color="#161616"/><stop offset="1" stop-color="#202020"/></linearGradient><rect x="625.40" y="267.10" width="16.20" height="18.40" rx="2.6" fill="url(#sb2)" stroke="#5c5c5c" stroke-width="0.8"/><path d="M628.15 270.78 L638.68 282.56" stroke="#c4c4c4" stroke-width="1.38" stroke-linecap="round"/><path d="M628.15 282.74 L637.06 272.62" stroke="#a9a9a9" stroke-width="1.62" stroke-linecap="round"/><circle cx="637.71" cy="271.70" r="2.11" fill="#d6d6d6"/><circle cx="638.68" cy="270.60" r="1.22" fill="#2c2c2c"/><linearGradient id="sb3" x1="0" y1="0" x2="0" y2="1"><stop offset="0" stop-color="#4e4e4e"/><stop offset=".5" stop-color="#2f2f2f"/><stop offset=".52" stop-color="#161616"/><stop offset="1" stop-color="#202020"/></linearGradient><rect x="625.40" y="289.30" width="16.20" height="18.40" rx="2.6" fill="url(#sb3)" stroke="#5c5c5c" stroke-width="0.8"/><path d="M628.96 304.02 Q628.64 299.60 633.50 299.24 Q638.36 299.60 638.04 304.02 Q633.50 305.49 628.96 304.02 Z" fill="#b9b9b9"/><ellipse cx="633.50" cy="296.29" rx="2.43" ry="2.92" fill="#d0d0d0"/><linearGradient id="sb4" x1="0" y1="0" x2="0" y2="1"><stop offset="0" stop-color="#fdeab4"/><stop offset=".25" stop-color="#f6cf6e"/><stop offset=".6" stop-color="#efba4c"/><stop offset="1" stop-color="#dca53c"/></linearGradient><rect x="625.40" y="310.90" width="16.20" height="19.80" rx="2.4" fill="url(#sb4)"/><rect x="627.99" y="315.85" width="11.02" height="7.13" rx="0.6" fill="#2b2a22"/><path d="M629.53 317.99 L633.50 320.98 L637.47 317.99 L636.80 320.27 L633.50 322.62 L630.20 320.27 Z" fill="#c2c044"/><rect x="627.99" y="323.57" width="11.02" height="1.68" rx="0.5" fill="#f7efd6"/><rect x="631.30" y="325.55" width="4.41" height="1.19" fill="#b8933a"/><rect x="645.50" y="244.10" width="117.40" height="86.60" fill="#050505" stroke="#4a4a4a" stroke-width="1"/></svg>
<div class="t" style="left:652.91px;top:230.00px;font-size:9.6px;transform:scaleX(1.0532);color:#e4e4e4;">DISPLAY SET UP</div>
<div class="t" style="left:651.53px;top:256.00px;font-size:7.4px;transform:scaleX(0.9792);color:#a9a9a9;">Clock</div>
<svg width="1192" height="847" viewBox="0 0 1192 847"><rect x="647.00" y="266.80" width="112.80" height="14.10" rx="1.6" fill="url(#bg)"/></svg>
<div class="t" style="left:651.03px;top:270.00px;font-size:8.6px;transform:scaleX(1.0135);color:#2a1d10;font-weight:bold;">Display</div>
<div class="t" style="left:651.46px;top:285.00px;font-size:7.4px;transform:scaleX(0.9522);color:#a9a9a9;">Unit</div>
<div class="t" style="left:651.47px;top:299.00px;font-size:7.4px;transform:scaleX(0.9348);color:#a9a9a9;">Rear Camera</div>
<div class="t" style="left:651.45px;top:315.00px;font-size:7.4px;transform:scaleX(0.9795);color:#a9a9a9;">Language</div>
<svg width="1192" height="847" viewBox="0 0 1192 847"><rect x="667.60" y="269.00" width="72.40" height="36.70" fill="url(#pg)"/><rect x="671.40" y="273.00" width="63.30" height="12.30" rx="1" fill="url(#pgl)" stroke="#b5b5b5" stroke-width="0.8"/><rect x="671.40" y="288.30" width="63.30" height="13.20" rx="1" fill="url(#pgd)" stroke="#3a3a3a" stroke-width="0.8"/></svg>
<div class="t" style="left:673.46px;top:278.00px;font-size:6.8px;transform:scaleX(1.0870);color:#9a9a9a;">Brightness Setting</div>
<div class="t" style="left:682.37px;top:292.00px;font-size:6.8px;transform:scaleX(1.0685);color:#e6c04e;">Type Display</div>
<div class="t" style="left:725.12px;top:334.00px;font-size:5.8px;transform:scaleX(1.1053);color:#3a3a3a;">75793CD33F</div>
<svg width="1192" height="847" viewBox="0 0 1192 847"><path d="M771.5 282.5 H786.5" stroke="#1a1a1a" stroke-width="1.1" fill="none"/><path d="M790.5 282.5 L783.1 279.6 L785.1 282.5 L783.1 285.4 Z" fill="#1a1a1a"/></svg>
<svg width="1192" height="847" viewBox="0 0 1192 847"><rect x="796" y="226" width="141.00" height="106.00" fill="#050505"/><rect x="796" y="226" width="141.00" height="18.00" fill="url(#hg)"/><linearGradient id="sb5" x1="0" y1="0" x2="0" y2="1"><stop offset="0" stop-color="#4e4e4e"/><stop offset=".5" stop-color="#2f2f2f"/><stop offset=".52" stop-color="#161616"/><stop offset="1" stop-color="#202020"/></linearGradient><rect x="798.40" y="245.80" width="16.40" height="18.60" rx="2.6" fill="url(#sb5)" stroke="#5c5c5c" stroke-width="0.8"/><circle cx="806.60" cy="255.10" r="4.92" fill="none" stroke="#c9c9c9" stroke-width="2.79" stroke-dasharray="2.13 1.72"/><circle cx="806.60" cy="255.10" r="4.43" fill="#d2d2d2"/><circle cx="807.09" cy="254.94" r="2.79" fill="#1c1c1c"/><linearGradient id="sb6" x1="0" y1="0" x2="0" y2="1"><stop offset="0" stop-color="#4e4e4e"/><stop offset=".5" stop-color="#2f2f2f"/><stop offset=".52" stop-color="#161616"/><stop offset="1" stop-color="#202020"/></linearGradient><rect x="798.40" y="267.70" width="16.40" height="19.00" rx="2.6" fill="url(#sb6)" stroke="#5c5c5c" stroke-width="0.8"/><path d="M801.19 271.50 L811.85 283.66" stroke="#c4c4c4" stroke-width="1.39" stroke-linecap="round"/><path d="M801.19 283.85 L810.21 273.40" stroke="#a9a9a9" stroke-width="1.64" stroke-linecap="round"/><circle cx="810.86" cy="272.45" r="2.13" fill="#d6d6d6"/><circle cx="811.85" cy="271.31" r="1.23" fill="#2c2c2c"/><linearGradient id="sb7" x1="0" y1="0" x2="0" y2="1"><stop offset="0" stop-color="#4e4e4e"/><stop offset=".5" stop-color="#2f2f2f"/><stop offset=".52" stop-color="#161616"/><stop offset="1" stop-color="#202020"/></linearGradient><rect x="798.40" y="289.80" width="16.40" height="18.30" rx="2.6" fill="url(#sb7)" stroke="#5c5c5c" stroke-width="0.8"/><path d="M802.01 304.44 Q801.68 300.05 806.60 299.68 Q811.52 300.05 811.19 304.44 Q806.60 305.90 802.01 304.44 Z" fill="#b9b9b9"/><ellipse cx="806.60" cy="296.75" rx="2.46" ry="2.95" fill="#d0d0d0"/><linearGradient id="sb8" x1="0" y1="0" x2="0" y2="1"><stop offset="0" stop-color="#fdeab4"/><stop offset=".25" stop-color="#f6cf6e"/><stop offset=".6" stop-color="#efba4c"/><stop offset="1" stop-color="#dca53c"/></linearGradient><rect x="798.40" y="311.30" width="16.40" height="20.40" rx="2.4" fill="url(#sb8)"/><rect x="801.02" y="316.40" width="11.15" height="7.34" rx="0.6" fill="#2b2a22"/><path d="M802.59 318.60 L806.60 321.69 L810.61 318.60 L809.95 320.95 L806.60 323.38 L803.25 320.95 Z" fill="#c2c044"/><rect x="801.02" y="324.36" width="11.15" height="1.73" rx="0.5" fill="#f7efd6"/><rect x="804.37" y="326.40" width="4.46" height="1.22" fill="#b8933a"/><rect x="818.00" y="245.10" width="117.90" height="86.40" fill="#050505" stroke="#4a4a4a" stroke-width="1"/></svg>
<div class="t" style="left:825.92px;top:231.00px;font-size:9.6px;transform:scaleX(1.0466);color:#e4e4e4;">DISPLAY SET UP</div>
<div class="t" style="left:824.33px;top:257.00px;font-size:7.4px;transform:scaleX(0.9957);color:#a9a9a9;">Clock</div>
<svg width="1192" height="847" viewBox="0 0 1192 847"><rect x="820.50" y="267.40" width="112.50" height="14.20" rx="1.6" fill="url(#bg)"/></svg>
<div class="t" style="left:824.03px;top:271.00px;font-size:8.6px;transform:scaleX(1.0135);color:#2a1d10;font-weight:bold;">Display</div>
<div class="t" style="left:824.26px;top:286.00px;font-size:7.4px;transform:scaleX(0.9680);color:#a9a9a9;">Unit</div>
<div class="t" style="left:824.27px;top:300.00px;font-size:7.4px;transform:scaleX(0.9394);color:#a9a9a9;">Rear Camera</div>
<div class="t" style="left:824.15px;top:315.00px;font-size:7.4px;transform:scaleX(0.9841);color:#b8b8b8;">Language Selection</div>
<svg width="1192" height="847" viewBox="0 0 1192 847"><rect x="840.50" y="270.00" width="72.50" height="36.10" fill="url(#pg)"/><rect x="845.10" y="273.90" width="63.70" height="12.70" rx="1" fill="url(#pgd)" stroke="#3a3a3a" stroke-width="0.8"/><rect x="845.10" y="289.20" width="63.70" height="12.30" rx="1" fill="url(#pgl)" stroke="#b5b5b5" stroke-width="0.8"/></svg>
<div class="t" style="left:864.00px;top:278.00px;font-size:6.8px;transform:scaleX(1.1204);color:#e6c04e;">A Type</div>
<div class="t" style="left:863.43px;top:293.00px;font-size:6.8px;transform:scaleX(1.1479);color:#8e8e8e;">B Type</div>
<div class="t" style="left:896.62px;top:335.00px;font-size:5.8px;transform:scaleX(1.1025);color:#3a3a3a;">75793CD33G</div>
<svg width="1192" height="847" viewBox="0 0 1192 847"><path d="M943.5 282.5 H958.5" stroke="#1a1a1a" stroke-width="1.1" fill="none"/><path d="M962.5 282.5 L955.1 279.6 L957.1 282.5 L955.1 285.4 Z" fill="#1a1a1a"/></svg>
<svg width="1192" height="847" viewBox="0 0 1192 847"><defs><linearGradient id="ap" x1="0" y1="0" x2="0" y2="1"><stop offset="0" stop-color="#4a4a4a"/><stop offset=".48" stop-color="#2e2e2e"/><stop offset=".5" stop-color="#0b0b0b"/><stop offset="1" stop-color="#0a0a0a"/></linearGradient><linearGradient id="ar" x1="0" y1="0" x2="0" y2="1"><stop offset="0" stop-color="#3a3a3a"/><stop offset=".45" stop-color="#1c1c1c"/><stop offset=".5" stop-color="#050505"/><stop offset="1" stop-color="#080808"/></linearGradient><linearGradient id="at" x1="0" y1="0" x2="0" y2="1"><stop offset="0" stop-color="#f2f2f2"/><stop offset=".6" stop-color="#c4c4c4"/><stop offset="1" stop-color="#9d9d9d"/></linearGradient><linearGradient id="ah" x1="0" y1="0" x2="0" y2="1"><stop offset="0" stop-color="#454545"/><stop offset=".4" stop-color="#2a2a2a"/><stop offset=".45" stop-color="#050505"/><stop offset="1" stop-color="#000"/></linearGradient><linearGradient id="am" x1="0" y1="0" x2="0" y2="1"><stop offset="0" stop-color="#fbdc84"/><stop offset="1" stop-color="#e9a440"/></linearGradient></defs><rect x="969.50" y="226.40" width="137.50" height="104.60" rx="0" fill="#030303" /><rect x="969.50" y="226.40" width="137.50" height="17.00" rx="0" fill="url(#ah)" /><rect x="1076.60" y="228.80" width="16.80" height="12.60" rx="2.2" fill="#1f3d63" stroke="#b9d3ea" stroke-width="1.3" /><path d="M1079.6 238.6 L1090.4 231.4" stroke="#dfe9f3" stroke-width="0.9"/><rect x="1080" y="238.2" width="10" height="1.6" fill="#8fb2d4"/><rect x="1076" y="240.2" width="3.2" height="2.2" fill="#b9d3ea"/><rect x="1090.8" y="240.2" width="3.2" height="2.2" fill="#b9d3ea"/><rect x="1096.40" y="228.80" width="8.80" height="2.30" rx="0.3" fill="#ececec" /><rect x="1096.40" y="232.60" width="8.80" height="2.30" rx="0.3" fill="#ececec" /><rect x="1096.40" y="236.40" width="8.80" height="2.30" rx="0.3" fill="#ececec" /><rect x="1096.40" y="240.20" width="8.80" height="2.30" rx="0.3" fill="#ececec" /><rect x="972.30" y="246.30" width="78.90" height="49.00" rx="4" fill="url(#ap)" stroke="#6d6d6d" stroke-width="0.8" /><rect x="1052.50" y="246.30" width="52.40" height="49.00" rx="4" fill="url(#ap)" stroke="#6d6d6d" stroke-width="0.8" /><path d="M1003.3 252.6 L1022.3 285.6 H982.7 Z" fill="url(#at)"/><path d="M1029 259.9 L1035.6 254.6 L1042.2 259.9 Z" fill="#f3cd62"/><rect x="1030.00" y="262.40" width="11.20" height="2.00" rx="0.3" fill="#2c2c2c" /><rect x="1030.00" y="270.80" width="11.20" height="2.00" rx="0.3" fill="#2a2a2a" /><rect x="1029.00" y="275.60" width="13.20" height="3.50" rx="0.3" fill="#ee7f5c" /><rect x="1030.00" y="282.00" width="11.20" height="2.00" rx="0.3" fill="#33201c" /><circle cx="1078.70" cy="253.00" r="3.30" fill="none" stroke="#dcdcdc" stroke-width="1.65" stroke-dasharray="1.39 1.19"/><circle cx="1078.70" cy="253.00" r="2.57" fill="none" stroke="#dcdcdc" stroke-width="0.8"/><path d="M1077.38 253.00 H1080.02" stroke="#dcdcdc" stroke-width="0.7"/><rect x="1053.4" y="259.9" width="50.6" height="0.8" fill="#555"/><rect x="1055.20" y="263.30" width="47.30" height="6.10" rx="0.4" fill="url(#am)" /><rect x="972.30" y="297.90" width="68.10" height="13.70" rx="2.6" fill="url(#ar)" stroke="#5a5a5a" stroke-width="0.8" /><rect x="1042.40" y="297.90" width="62.50" height="13.70" rx="2.6" fill="url(#ar)" stroke="#5a5a5a" stroke-width="0.8" /><rect x="972.30" y="314.10" width="68.10" height="13.60" rx="2.6" fill="url(#ar)" stroke="#5a5a5a" stroke-width="0.8" /><rect x="1042.40" y="314.10" width="62.50" height="13.60" rx="2.6" fill="url(#ar)" stroke="#5a5a5a" stroke-width="0.8" /><path d="M978.10 317.40 H984.30 L981.80 321.20 L984.30 325.00 H978.10 L980.60 321.20 Z" fill="#d9a441"/><rect x="977.30" y="316.50" width="7.80" height="1.3" fill="#d9a441"/><rect x="977.30" y="324.60" width="7.80" height="1.3" fill="#d9a441"/><circle cx="1048.80" cy="304.60" r="2.60" fill="none" stroke="#e2a744" stroke-width="1.2"/><path d="M1048.80 299.80 V302.00 M1048.80 307.20 V309.40" stroke="#e2a744" stroke-width="2"/><path d="M1047.50 304.60 H1050.10" stroke="#e2a744" stroke-width="1"/><circle cx="1048.80" cy="320.80" r="2.80" fill="none" stroke="#e2a744" stroke-width="1.2"/><path d="M1048.80 315.80 V318.00 M1048.80 323.60 V325.80" stroke="#e2a744" stroke-width="2"/><circle cx="1048.80" cy="320.80" r="0.95" fill="#e2a744"/></svg>
<div class="t" style="left:1020.21px;top:228.00px;font-size:17.2px;transform:scaleX(0.7229);color:#f4f4f4;font-style:italic;">10:00</div>
<div class="t" style="left:1052.53px;top:236.00px;font-size:6.4px;color:#e8e8e8;font-weight:bold;">PM</div>
<div class="t" style="left:997.74px;top:261.00px;font-size:24px;transform:scaleX(0.5701);color:#3a3a3a;-webkit-text-stroke:1.9px #3a3a3a;">1</div>
<div class="t" style="left:1057.68px;top:264.00px;font-size:6.2px;transform:scaleX(0.8548);color:#3a2a10;font-weight:bold;">MANUAL</div>
<div class="t" style="left:1058.00px;top:271.00px;font-size:6px;transform:scaleX(0.9304);color:#a4a4a4;">AUTO LIGHT</div>
<div class="t" style="left:1058.00px;top:279.00px;font-size:6px;transform:scaleX(0.9372);color:#a4a4a4;">AUTO NORMAL</div>
<div class="t" style="left:1058.00px;top:287.00px;font-size:6px;transform:scaleX(0.9449);color:#a4a4a4;">AUTO HEAVY</div>
<div class="t" style="left:1003.77px;top:300.00px;font-size:11.2px;transform:scaleX(0.7726);color:#f2f2f2;-webkit-text-stroke:0.55px #f2f2f2;">1200</div>
<div class="t" style="left:1023.69px;top:302.00px;font-size:9px;transform:scaleX(0.9035);color:#eea23f;font-weight:bold;">rpm</div>
<div class="t" style="left:1072.51px;top:300.00px;font-size:11.2px;transform:scaleX(0.8833);color:#f2f2f2;-webkit-text-stroke:0.55px #f2f2f2;">83.5</div>
<div class="t" style="left:1094.03px;top:301.00px;font-size:10px;transform:scaleX(0.6595);color:#eea23f;">°C</div>
<div class="t" style="left:1009.41px;top:316.00px;font-size:11.2px;transform:scaleX(0.7806);color:#f2f2f2;-webkit-text-stroke:0.55px #f2f2f2;">31.7</div>
<div class="t" style="left:1027.12px;top:321.00px;font-size:7px;transform:scaleX(1.0884);color:#eea23f;font-weight:bold;">HR</div>
<div class="t" style="left:1073.02px;top:316.00px;font-size:11.2px;transform:scaleX(0.8598);color:#f2f2f2;-webkit-text-stroke:0.55px #f2f2f2;">61.5</div>
<div class="t" style="left:1094.03px;top:317.00px;font-size:10px;transform:scaleX(0.6595);color:#eea23f;">°C</div>
<div class="t" style="left:1070.02px;top:335.00px;font-size:5.8px;transform:scaleX(1.1096);color:#3a3a3a;">760993CD40</div>
<div class="t" style="left:1023.00px;top:340.00px;font-size:13.6px;transform:scaleX(0.8397);color:#272425;-webkit-text-stroke:0.22px #272425;">A type</div>
<svg width="1192" height="847" viewBox="0 0 1192 847"><path d="M943.5 421.6 H958.5" stroke="#1a1a1a" stroke-width="1.1" fill="none"/><path d="M962.5 421.6 L955.1 418.70000000000005 L957.1 421.6 L955.1 424.5 Z" fill="#1a1a1a"/></svg>
<svg width="1192" height="847" viewBox="0 0 1192 847"><defs><linearGradient id="bh" x1="0" y1="0" x2="0" y2="1"><stop offset="0" stop-color="#353535"/><stop offset=".5" stop-color="#1d1d1d"/><stop offset=".9" stop-color="#141414"/><stop offset="1" stop-color="#3e3e3e"/></linearGradient><linearGradient id="bn" x1="0" y1="0" x2="1" y2="1"><stop offset="0" stop-color="#6cc35a"/><stop offset=".5" stop-color="#4fae45"/><stop offset="1" stop-color="#3a9438"/></linearGradient></defs><rect x="968.10" y="365.40" width="141.10" height="105.60" rx="0" fill="#0b0a09" /><rect x="968.10" y="365.40" width="141.10" height="17.20" rx="0" fill="url(#bh)" /><circle cx="977.6" cy="374.2" r="3.6" fill="none" stroke="#4a4a4a" stroke-width="1.1"/><path d="M975.2 376.6 L980 371.8" stroke="#4a4a4a" stroke-width="1"/><path d="M983.4 369.4 L990.6 372 V377 L983.4 379.8 Z" fill="#454545"/><rect x="990.6" y="372.6" width="1.6" height="3.6" fill="#3a3a3a"/><rect x="1014.20" y="366.60" width="33.90" height="14.60" rx="0" fill="#3c3c3c" /><rect x="1075.20" y="368.40" width="17.60" height="11.00" rx="2.2" fill="#5f5f5a" stroke="#e6a94e" stroke-width="1.2" /><path d="M1077.4 376.4 Q1084 374 1090.6 376.4" stroke="#9a9a92" stroke-width="0.8" fill="none"/><rect x="1074.6" y="378.2" width="3" height="2.2" fill="#e6a94e"/><rect x="1090.4" y="378.2" width="3" height="2.2" fill="#e6a94e"/><rect x="1095.00" y="367.40" width="9.90" height="2.00" rx="0.2" fill="#3a3632" /><rect x="1095.00" y="370.80" width="9.90" height="2.00" rx="0.2" fill="#3a3632" /><rect x="1095.00" y="374.60" width="9.90" height="2.40" rx="0.2" fill="#eeaa4e" /><rect x="1095.00" y="378.40" width="9.90" height="2.40" rx="0.2" fill="#eeaa4e" /><path d="M974.6 402.6 L979.7 398 L984.8 402.6" fill="none" stroke="#dba258" stroke-width="3.2" stroke-linejoin="miter" stroke-linecap="square"/><path d="M974.6 402.6 L979.7 398 L984.8 402.6" fill="none" stroke="#2a2118" stroke-width="1.2" stroke-linejoin="miter" stroke-linecap="square"/><rect x="968.1" y="381.2" width="141.1" height="1" fill="#585858"/><rect x="973.20" y="408.00" width="12.40" height="3.00" rx="0.2" fill="#5a5a58" /><rect x="973.20" y="413.60" width="12.40" height="3.00" rx="0.2" fill="#5a5a58" /><rect x="973.20" y="419.30" width="12.40" height="3.30" rx="0.2" fill="#f3b563" /><rect x="973.20" y="425.10" width="12.40" height="3.30" rx="0.2" fill="#f3b563" /><path d="M974.6 434.2 L979.7 438.8 L984.8 434.2" fill="none" stroke="#454545" stroke-width="3" stroke-linejoin="miter" stroke-linecap="square"/><path d="M974.6 434.2 L979.7 438.8 L984.8 434.2" fill="none" stroke="#0e0e0e" stroke-width="1.2" stroke-linejoin="miter" stroke-linecap="square"/><rect x="1037.5" y="399.90000000000003" width="71" height="0.8" fill="#4a4a4a"/><rect x="1037.5" y="417.90000000000003" width="71" height="0.8" fill="#4a4a4a"/><rect x="1037.5" y="435.40000000000003" width="71" height="0.8" fill="#4a4a4a"/><rect x="968.1" y="454.1" width="141.1" height="0.9" fill="#4e4e4e"/><path d="M1042.20 406.20 H1048.60 L1046.00 409.80 L1048.60 413.40 H1042.20 L1044.80 409.80 Z" fill="#dfa050"/><rect x="1041.40" y="405.30" width="8.00" height="1.3" fill="#dfa050"/><rect x="1041.40" y="413.00" width="8.00" height="1.3" fill="#dfa050"/><circle cx="1045.40" cy="427.60" r="2.60" fill="none" stroke="#e2a24c" stroke-width="1.2"/><path d="M1045.40 422.80 V425.00 M1045.40 430.20 V432.40" stroke="#e2a24c" stroke-width="2"/><path d="M1044.10 427.60 H1046.70" stroke="#e2a24c" stroke-width="1"/><circle cx="1045.40" cy="445.00" r="2.80" fill="none" stroke="#e2a24c" stroke-width="1.2"/><path d="M1045.40 440.00 V442.20 M1045.40 447.80 V450.00" stroke="#e2a24c" stroke-width="2"/><circle cx="1045.40" cy="445.00" r="0.95" fill="#e2a24c"/><circle cx="980.80" cy="462.60" r="3.40" fill="none" stroke="#e0e0e0" stroke-width="1.70" stroke-dasharray="1.43 1.22"/><circle cx="980.80" cy="462.60" r="2.65" fill="none" stroke="#e0e0e0" stroke-width="0.8"/><path d="M979.44 462.60 H982.16" stroke="#e0e0e0" stroke-width="0.7"/><rect x="990.60" y="459.40" width="26.90" height="6.80" rx="0.3" fill="#5a5a5a" /><rect x="1019.10" y="459.40" width="27.10" height="6.80" rx="0.3" fill="#5a5a5a" /><rect x="1048.10" y="459.40" width="27.70" height="6.80" rx="0.3" fill="#5a5a5a" /><rect x="1077.60" y="459.40" width="26.70" height="6.80" rx="0.3" fill="#5a5a5a" /></svg>
<div class="t" style="left:1016.00px;top:366.00px;font-size:16.4px;transform:scaleX(0.7777);color:#f4f4f4;font-style:italic;">10:00</div>
<div class="t" style="left:1049.10px;top:375.00px;font-size:6px;transform:scaleX(1.0785);color:#e8e8e8;font-weight:bold;">PM</div>
<div class="t" style="left:992.99px;top:391.00px;font-size:56.4px;transform:scaleX(0.9675);color:transparent;font-weight:bold;background:linear-gradient(100deg,#7bcf66 0%,#58b54b 45%,#3f9c3c 100%);-webkit-background-clip:text;background-clip:text;">N</div>
<div class="t" style="left:1071.26px;top:387.00px;font-size:11.4px;transform:scaleX(0.9112);color:#f0f0f0;">1200</div>
<div class="t" style="left:1095.85px;top:390.00px;font-size:7px;transform:scaleX(0.8081);color:#d59a52;font-weight:bold;">rpm</div>
<div class="t" style="left:1071.92px;top:405.00px;font-size:11.4px;transform:scaleX(1.0054);color:#f0f0f0;">31.7</div>
<div class="t" style="left:1096.20px;top:407.00px;font-size:8.4px;transform:scaleX(0.7911);color:#d59a52;font-weight:bold;">HR</div>
<div class="t" style="left:1071.86px;top:422.00px;font-size:11.4px;transform:scaleX(1.0054);color:#f0f0f0;">83.5</div>
<div class="t" style="left:1095.99px;top:424.00px;font-size:8.6px;transform:scaleX(0.8111);color:#e8e0d0;">°C</div>
<div class="t" style="left:1071.73px;top:440.00px;font-size:11.4px;transform:scaleX(1.0114);color:#f0f0f0;">61.5</div>
<div class="t" style="left:1095.99px;top:442.00px;font-size:8.6px;transform:scaleX(0.8111);color:#e8e0d0;">°C</div>
<div class="t" style="left:995.68px;top:462.00px;font-size:4.6px;transform:scaleX(0.8568);color:#d89a48;">MANUAL</div>
<div class="t" style="left:1024.60px;top:462.00px;font-size:4.6px;transform:scaleX(0.9197);color:#a8a8a8;">A LIGHT</div>
<div class="t" style="left:1051.00px;top:462.00px;font-size:4.6px;transform:scaleX(0.9455);color:#a8a8a8;">A NORMAL</div>
<div class="t" style="left:1082.40px;top:462.00px;font-size:4.6px;transform:scaleX(0.9217);color:#a8a8a8;">A HEAVY</div>
<div class="t" style="left:1069.72px;top:474.00px;font-size:5.8px;transform:scaleX(1.1155);color:#3a3a3a;">760993CD33</div>
<div class="t" style="left:1023.41px;top:480.00px;font-size:13.6px;transform:scaleX(0.8395);color:#272425;-webkit-text-stroke:0.22px #272425;">B type</div>
<div class="t" style="left:609.73px;top:513.00px;font-size:15.7px;transform:scaleX(1.0413);color:#3a3738;font-family:'DejaVu Sans',sans-serif;">③</div>
<div class="t" style="left:624.58px;top:513.00px;font-size:13.6px;transform:scaleX(0.9180);color:#272425;-webkit-text-stroke:0.22px #272425;">Unit</div>
<svg width="1192" height="847" viewBox="0 0 1192 847"><rect x="624" y="531" width="115.20" height="86.80" fill="#050505"/><rect x="624" y="531" width="115.20" height="15.20" fill="url(#hg)"/><linearGradient id="sb9" x1="0" y1="0" x2="0" y2="1"><stop offset="0" stop-color="#4e4e4e"/><stop offset=".5" stop-color="#2f2f2f"/><stop offset=".52" stop-color="#161616"/><stop offset="1" stop-color="#202020"/></linearGradient><rect x="625.10" y="547.50" width="13.00" height="15.00" rx="2.6" fill="url(#sb9)" stroke="#5c5c5c" stroke-width="0.8"/><circle cx="631.60" cy="555.00" r="3.90" fill="none" stroke="#c9c9c9" stroke-width="2.21" stroke-dasharray="1.69 1.36"/><circle cx="631.60" cy="555.00" r="3.51" fill="#d2d2d2"/><circle cx="631.99" cy="554.87" r="2.21" fill="#1c1c1c"/><linearGradient id="sb10" x1="0" y1="0" x2="0" y2="1"><stop offset="0" stop-color="#4e4e4e"/><stop offset=".5" stop-color="#2f2f2f"/><stop offset=".52" stop-color="#161616"/><stop offset="1" stop-color="#202020"/></linearGradient><rect x="625.10" y="565.40" width="13.00" height="15.10" rx="2.6" fill="url(#sb10)" stroke="#5c5c5c" stroke-width="0.8"/><path d="M627.31 568.42 L635.76 578.08" stroke="#c4c4c4" stroke-width="1.10" stroke-linecap="round"/><path d="M627.31 578.24 L634.46 569.93" stroke="#a9a9a9" stroke-width="1.30" stroke-linecap="round"/><circle cx="634.98" cy="569.17" r="1.69" fill="#d6d6d6"/><circle cx="635.76" cy="568.27" r="0.97" fill="#2c2c2c"/><linearGradient id="sb11" x1="0" y1="0" x2="0" y2="1"><stop offset="0" stop-color="#4e4e4e"/><stop offset=".5" stop-color="#2f2f2f"/><stop offset=".52" stop-color="#161616"/><stop offset="1" stop-color="#202020"/></linearGradient><rect x="625.10" y="583.10" width="13.00" height="14.70" rx="2.6" fill="url(#sb11)" stroke="#5c5c5c" stroke-width="0.8"/><path d="M627.96 594.86 Q627.70 591.33 631.60 591.04 Q635.50 591.33 635.24 594.86 Q631.60 596.04 627.96 594.86 Z" fill="#b9b9b9"/><ellipse cx="631.60" cy="588.69" rx="1.95" ry="2.34" fill="#d0d0d0"/><linearGradient id="sb12" x1="0" y1="0" x2="0" y2="1"><stop offset="0" stop-color="#fdeab4"/><stop offset=".25" stop-color="#f6cf6e"/><stop offset=".6" stop-color="#efba4c"/><stop offset="1" stop-color="#dca53c"/></linearGradient><rect x="625.10" y="600.70" width="13.00" height="15.90" rx="2.4" fill="url(#sb12)"/><rect x="627.18" y="604.67" width="8.84" height="5.72" rx="0.6" fill="#2b2a22"/><path d="M628.42 606.39 L631.60 608.80 L634.78 606.39 L634.25 608.22 L631.60 610.11 L628.95 608.22 Z" fill="#c2c044"/><rect x="627.18" y="610.88" width="8.84" height="1.35" rx="0.5" fill="#f7efd6"/><rect x="629.83" y="612.47" width="3.54" height="0.95" fill="#b8933a"/><rect x="640.90" y="546.50" width="96.00" height="70.40" fill="#050505" stroke="#4a4a4a" stroke-width="1"/></svg>
<div class="t" style="left:646.52px;top:535.00px;font-size:8.4px;transform:scaleX(0.9664);color:#d4d4d4;font-weight:bold;">DISPLAY SET UP</div>
<div class="t" style="left:646.39px;top:557.00px;font-size:6.4px;transform:scaleX(0.9911);color:#9c9c9c;">Clock</div>
<div class="t" style="left:646.21px;top:568.00px;font-size:6.4px;transform:scaleX(0.9721);color:#9c9c9c;">Display</div>
<svg width="1192" height="847" viewBox="0 0 1192 847"><rect x="642.70" y="576.60" width="92.10" height="12.30" rx="1.6" fill="url(#bg)"/></svg>
<div class="t" style="left:646.26px;top:580.00px;font-size:7.4px;transform:scaleX(0.9959);color:#2a1d10;font-weight:bold;">Unit</div>
<div class="t" style="left:646.23px;top:592.00px;font-size:6.4px;transform:scaleX(0.9311);color:#9c9c9c;">Rear Camera</div>
<div class="t" style="left:646.22px;top:604.00px;font-size:6.4px;transform:scaleX(0.9522);color:#9c9c9c;">Language</div>
<div class="t" style="left:705.82px;top:621.00px;font-size:5.8px;transform:scaleX(1.1066);color:#3a3a3a;">75793CD34</div>
<svg width="1192" height="847" viewBox="0 0 1192 847"><path d="M745.5 576.6 H760.5" stroke="#1a1a1a" stroke-width="1.1" fill="none"/><path d="M764.5 576.6 L757.1 573.7 L759.1 576.6 L757.1 579.5 Z" fill="#1a1a1a"/></svg>
<svg width="1192" height="847" viewBox="0 0 1192 847"><rect x="772" y="530" width="141.20" height="106.00" fill="#050505"/><rect x="772" y="530" width="141.20" height="17.60" fill="url(#hg)"/><linearGradient id="sb13" x1="0" y1="0" x2="0" y2="1"><stop offset="0" stop-color="#4e4e4e"/><stop offset=".5" stop-color="#2f2f2f"/><stop offset=".52" stop-color="#161616"/><stop offset="1" stop-color="#202020"/></linearGradient><rect x="773.40" y="548.70" width="17.40" height="18.60" rx="2.6" fill="url(#sb13)" stroke="#5c5c5c" stroke-width="0.8"/><circle cx="782.10" cy="558.00" r="5.22" fill="none" stroke="#c9c9c9" stroke-width="2.96" stroke-dasharray="2.26 1.83"/><circle cx="782.10" cy="558.00" r="4.70" fill="#d2d2d2"/><circle cx="782.62" cy="557.83" r="2.96" fill="#1c1c1c"/><linearGradient id="sb14" x1="0" y1="0" x2="0" y2="1"><stop offset="0" stop-color="#4e4e4e"/><stop offset=".5" stop-color="#2f2f2f"/><stop offset=".52" stop-color="#161616"/><stop offset="1" stop-color="#202020"/></linearGradient><rect x="773.40" y="571.30" width="17.40" height="18.30" rx="2.6" fill="url(#sb14)" stroke="#5c5c5c" stroke-width="0.8"/><path d="M776.36 574.96 L787.67 586.67" stroke="#c4c4c4" stroke-width="1.48" stroke-linecap="round"/><path d="M776.36 586.86 L785.93 576.79" stroke="#a9a9a9" stroke-width="1.74" stroke-linecap="round"/><circle cx="786.62" cy="575.88" r="2.26" fill="#d6d6d6"/><circle cx="787.67" cy="574.78" r="1.31" fill="#2c2c2c"/><linearGradient id="sb15" x1="0" y1="0" x2="0" y2="1"><stop offset="0" stop-color="#4e4e4e"/><stop offset=".5" stop-color="#2f2f2f"/><stop offset=".52" stop-color="#161616"/><stop offset="1" stop-color="#202020"/></linearGradient><rect x="773.40" y="593.20" width="17.40" height="18.30" rx="2.6" fill="url(#sb15)" stroke="#5c5c5c" stroke-width="0.8"/><path d="M777.23 607.84 Q776.88 603.45 782.10 603.08 Q787.32 603.45 786.97 607.84 Q782.10 609.30 777.23 607.84 Z" fill="#b9b9b9"/><ellipse cx="782.10" cy="600.15" rx="2.61" ry="3.13" fill="#d0d0d0"/><linearGradient id="sb16" x1="0" y1="0" x2="0" y2="1"><stop offset="0" stop-color="#fdeab4"/><stop offset=".25" stop-color="#f6cf6e"/><stop offset=".6" stop-color="#efba4c"/><stop offset="1" stop-color="#dca53c"/></linearGradient><rect x="773.40" y="614.70" width="17.40" height="19.90" rx="2.4" fill="url(#sb16)"/><rect x="776.18" y="619.67" width="11.83" height="7.16" rx="0.6" fill="#2b2a22"/><path d="M777.84 621.82 L782.10 624.83 L786.36 621.82 L785.65 624.12 L782.10 626.48 L778.55 624.12 Z" fill="#c2c044"/><rect x="776.18" y="627.44" width="11.83" height="1.69" rx="0.5" fill="#f7efd6"/><rect x="779.73" y="629.43" width="4.73" height="1.19" fill="#b8933a"/><rect x="794.60" y="549.70" width="114.70" height="83.60" rx="3" fill="#060606" stroke="#8d7448" stroke-width="1"/></svg>
<div class="t" style="left:803.72px;top:533.00px;font-size:9.6px;transform:scaleX(1.0374);color:#e4e4e4;">DISPLAY SET UP</div>
<div class="t" style="left:798.72px;top:554.00px;font-size:7.2px;transform:scaleX(0.9673);color:#eaeaea;">Unit</div>
<svg width="1192" height="847" viewBox="0 0 1192 847"><rect x="795" y="561.8" width="114" height="1" fill="#8d7448"/><rect x="796.50" y="563.80" width="111.70" height="16.10" rx="1.6" fill="url(#bg)"/></svg>
<div class="t" style="left:801.62px;top:567.00px;font-size:9.4px;transform:scaleX(0.9580);color:#1c130a;-webkit-text-stroke:0.3px #1c130a;">Temp</div>
<div class="t" style="left:801.25px;top:585.00px;font-size:7.4px;transform:scaleX(0.9777);color:#a9a9a9;">Distance</div>
<div class="t" style="left:801.25px;top:599.00px;font-size:7.4px;transform:scaleX(0.9776);color:#a9a9a9;">Pressure</div>
<div class="t" style="left:873.63px;top:639.00px;font-size:5.8px;transform:scaleX(1.0931);color:#3a3a3a;">75793CD34A</div>
<svg width="1192" height="847" viewBox="0 0 1192 847"><path d="M918.5 576.6 H933.5" stroke="#1a1a1a" stroke-width="1.1" fill="none"/><path d="M937.5 576.6 L930.1 573.7 L932.1 576.6 L930.1 579.5 Z" fill="#1a1a1a"/></svg>
<svg width="1192" height="847" viewBox="0 0 1192 847"><rect x="945" y="530" width="141.00" height="104.80" fill="#050505"/><rect x="945" y="530" width="141.00" height="17.30" fill="url(#hg)"/><linearGradient id="sb17" x1="0" y1="0" x2="0" y2="1"><stop offset="0" stop-color="#4e4e4e"/><stop offset=".5" stop-color="#2f2f2f"/><stop offset=".52" stop-color="#161616"/><stop offset="1" stop-color="#202020"/></linearGradient><rect x="946.40" y="548.70" width="17.10" height="18.60" rx="2.6" fill="url(#sb17)" stroke="#5c5c5c" stroke-width="0.8"/><circle cx="954.95" cy="558.00" r="5.13" fill="none" stroke="#c9c9c9" stroke-width="2.91" stroke-dasharray="2.22 1.80"/><circle cx="954.95" cy="558.00" r="4.62" fill="#d2d2d2"/><circle cx="955.46" cy="557.83" r="2.91" fill="#1c1c1c"/><linearGradient id="sb18" x1="0" y1="0" x2="0" y2="1"><stop offset="0" stop-color="#4e4e4e"/><stop offset=".5" stop-color="#2f2f2f"/><stop offset=".52" stop-color="#161616"/><stop offset="1" stop-color="#202020"/></linearGradient><rect x="946.40" y="570.70" width="17.10" height="20.00" rx="2.6" fill="url(#sb18)" stroke="#5c5c5c" stroke-width="0.8"/><path d="M949.31 574.70 L960.42 587.50" stroke="#c4c4c4" stroke-width="1.45" stroke-linecap="round"/><path d="M949.31 587.70 L958.71 576.70" stroke="#a9a9a9" stroke-width="1.71" stroke-linecap="round"/><circle cx="959.40" cy="575.70" r="2.22" fill="#d6d6d6"/><circle cx="960.42" cy="574.50" r="1.28" fill="#2c2c2c"/><linearGradient id="sb19" x1="0" y1="0" x2="0" y2="1"><stop offset="0" stop-color="#4e4e4e"/><stop offset=".5" stop-color="#2f2f2f"/><stop offset=".52" stop-color="#161616"/><stop offset="1" stop-color="#202020"/></linearGradient><rect x="946.40" y="593.70" width="17.10" height="18.10" rx="2.6" fill="url(#sb19)" stroke="#5c5c5c" stroke-width="0.8"/><path d="M950.16 608.18 Q949.82 603.84 954.95 603.47 Q960.08 603.84 959.74 608.18 Q954.95 609.63 950.16 608.18 Z" fill="#b9b9b9"/><ellipse cx="954.95" cy="600.58" rx="2.57" ry="3.08" fill="#d0d0d0"/><linearGradient id="sb20" x1="0" y1="0" x2="0" y2="1"><stop offset="0" stop-color="#fdeab4"/><stop offset=".25" stop-color="#f6cf6e"/><stop offset=".6" stop-color="#efba4c"/><stop offset="1" stop-color="#dca53c"/></linearGradient><rect x="946.40" y="615.20" width="17.10" height="18.90" rx="2.4" fill="url(#sb20)"/><rect x="949.14" y="619.92" width="11.63" height="6.80" rx="0.6" fill="#2b2a22"/><path d="M950.76 621.97 L954.95 624.82 L959.14 621.97 L958.44 624.14 L954.95 626.39 L951.46 624.14 Z" fill="#c2c044"/><rect x="949.14" y="627.30" width="11.63" height="1.61" rx="0.5" fill="#f7efd6"/><rect x="952.62" y="629.19" width="4.65" height="1.13" fill="#b8933a"/><rect x="967.40" y="549.20" width="115.50" height="84.10" rx="3" fill="#060606" stroke="#8d7448" stroke-width="1"/></svg>
<div class="t" style="left:976.72px;top:533.00px;font-size:9.6px;transform:scaleX(1.0374);color:#e4e4e4;">DISPLAY SET UP</div>
<div class="t" style="left:971.40px;top:554.00px;font-size:7.2px;transform:scaleX(0.9917);color:#eaeaea;">Unit</div>
<svg width="1192" height="847" viewBox="0 0 1192 847"><rect x="968" y="561.8" width="114.4" height="1" fill="#8d7448"/><rect x="969.10" y="563.80" width="111.50" height="16.90" rx="1.6" fill="url(#bg)"/></svg>
<div class="t" style="left:974.42px;top:567.00px;font-size:9.4px;transform:scaleX(0.9714);color:#1c130a;-webkit-text-stroke:0.3px #1c130a;">Temp</div>
<div class="t" style="left:974.05px;top:585.00px;font-size:7.4px;transform:scaleX(0.9813);color:#a9a9a9;">Distance</div>
<div class="t" style="left:974.05px;top:599.00px;font-size:7.4px;transform:scaleX(0.9811);color:#a9a9a9;">Pressure</div>
<svg width="1192" height="847" viewBox="0 0 1192 847"><rect x="989.50" y="573.70" width="71.70" height="36.90" fill="url(#pg)"/><rect x="994.10" y="578.00" width="63.00" height="12.60" rx="1" fill="url(#pgd)" stroke="#3a3a3a" stroke-width="0.8"/><rect x="994.10" y="593.70" width="63.00" height="11.50" rx="1" fill="url(#pgl)" stroke="#b5b5b5" stroke-width="0.8"/></svg>
<div class="t" style="left:1021.57px;top:582.00px;font-size:6.6px;transform:scaleX(1.1519);color:#b89a48;">°F</div>
<div class="t" style="left:1021.16px;top:597.00px;font-size:6.6px;transform:scaleX(1.1719);color:#a0a0a0;">°C</div>
<div class="t" style="left:1046.53px;top:637.00px;font-size:5.8px;transform:scaleX(1.0826);color:#3a3a3a;">75793CD34B</div>
<div class="t" style="left:627.48px;top:652.00px;font-size:10px;color:#4a4a4a;">·</div>
<div class="t" style="left:627.48px;top:669.00px;font-size:10px;color:#4a4a4a;">·</div>
<div class="t" style="left:627.48px;top:687.00px;font-size:10px;color:#4a4a4a;">·</div>
<div class="t" style="left:636.89px;top:649.00px;font-size:13.7px;transform:scaleX(0.8476);color:#272425;-webkit-text-stroke:0.22px #272425;">Temperature</div>
<div class="t" style="left:704.35px;top:649.00px;font-size:13.7px;color:#272425;">:</div>
<div class="t" style="left:711.59px;top:649.00px;font-size:13.7px;transform:scaleX(0.7478);color:#272425;-webkit-text-stroke:0.22px #272425;">°C</div>
<div class="t" style="left:725.58px;top:653.00px;font-size:8.4px;transform:scaleX(1.9168);color:#272425;font-family:'DejaVu Sans',sans-serif;">↔</div>
<div class="t" style="left:739.75px;top:649.00px;font-size:13.7px;transform:scaleX(0.8054);color:#272425;-webkit-text-stroke:0.22px #272425;">°F</div>
<div class="t" style="left:636.21px;top:667.00px;font-size:13.7px;transform:scaleX(0.8379);color:#272425;-webkit-text-stroke:0.22px #272425;">Distance</div>
<div class="t" style="left:702.55px;top:667.00px;font-size:13.7px;color:#272425;">:</div>
<div class="t" style="left:708.51px;top:667.00px;font-size:13.7px;transform:scaleX(0.7922);color:#272425;-webkit-text-stroke:0.22px #272425;">km</div>
<div class="t" style="left:724.40px;top:671.00px;font-size:8.4px;transform:scaleX(1.8535);color:#272425;font-family:'DejaVu Sans',sans-serif;">↔</div>
<div class="t" style="left:739.12px;top:667.00px;font-size:13.7px;transform:scaleX(0.7726);color:#272425;-webkit-text-stroke:0.22px #272425;">mile</div>
<div class="t" style="left:636.22px;top:685.00px;font-size:13.7px;transform:scaleX(0.8327);color:#272425;-webkit-text-stroke:0.22px #272425;">Pressure</div>
<div class="t" style="left:702.55px;top:685.00px;font-size:13.7px;color:#272425;">:</div>
<div class="t" style="left:708.57px;top:685.00px;font-size:13.7px;transform:scaleX(0.7205);color:#272425;-webkit-text-stroke:0.22px #272425;">bar</div>
<div class="t" style="left:725.60px;top:689.00px;font-size:8.4px;transform:scaleX(1.8535);color:#272425;font-family:'DejaVu Sans',sans-serif;">↔</div>
<div class="t" style="left:740.42px;top:685.00px;font-size:13.7px;transform:scaleX(0.7346);color:#272425;-webkit-text-stroke:0.22px #272425;">Mpa</div>
<div class="t" style="left:762.92px;top:689.00px;font-size:8.4px;transform:scaleX(1.8059);color:#272425;font-family:'DejaVu Sans',sans-serif;">↔</div>
<div class="t" style="left:777.05px;top:685.00px;font-size:13.7px;transform:scaleX(0.7460);color:#272425;-webkit-text-stroke:0.22px #272425;">kgf/m</div>
<div class="t" style="left:801.49px;top:687.00px;font-size:6.6px;transform:scaleX(0.9796);color:#272425;">2</div>
<div class="t" style="left:807.62px;top:689.00px;font-size:8.4px;transform:scaleX(1.8059);color:#272425;font-family:'DejaVu Sans',sans-serif;">↔</div>
<div class="t" style="left:822.33px;top:685.00px;font-size:13.7px;transform:scaleX(0.7634);color:#272425;-webkit-text-stroke:0.22px #272425;">psi</div>
</div>
  <div id="frame"></div>
</div>
</body>
</html>
